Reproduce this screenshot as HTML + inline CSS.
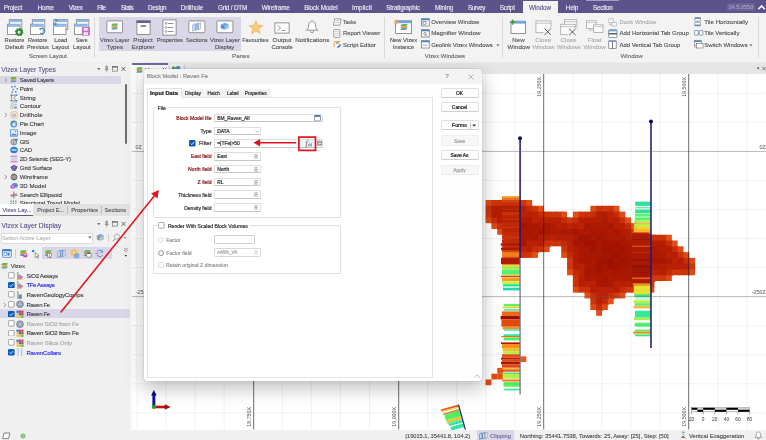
<!DOCTYPE html>
<html><head><meta charset="utf-8"><title>Vizex - Block Model : Raven Fe</title>
<style>
html,body{margin:0;padding:0;}
body{width:766px;height:440px;overflow:hidden;background:#f0f0f0;position:relative;font-family:"Liberation Sans",sans-serif;}
#root{position:absolute;left:0;top:0;width:766px;height:440px;overflow:hidden;will-change:transform;filter:blur(0.3px);}
.b{position:absolute;box-sizing:border-box;display:block;}
.t{position:absolute;white-space:nowrap;display:block;-webkit-text-stroke:0.12px;}
</style></head><body><div id="root">
<div class="b " style="left:0px;top:0px;width:766px;height:13.2px;background:#5d538b;"></div>
<div class="b " style="left:586px;top:0px;width:33px;height:1px;background:#a59cc9;"></div>
<div class="b " style="left:522.5px;top:1.2px;width:35.8px;height:12.2px;background:#f3f3f3;"></div>
<span class="t" style="left:3.8px;top:4px;font-size:6.3px;line-height:7px;color:#f1eff8;letter-spacing:-0.2px;">Project</span>
<span class="t" style="left:37.8px;top:4px;font-size:6.3px;line-height:7px;color:#f1eff8;letter-spacing:-0.23px;">Home</span>
<span class="t" style="left:68.8px;top:4px;font-size:6.3px;line-height:7px;color:#f1eff8;letter-spacing:-0.32px;">Vizex</span>
<span class="t" style="left:97.2px;top:4px;font-size:6.3px;line-height:7px;color:#f1eff8;letter-spacing:-0.46px;">File</span>
<span class="t" style="left:121px;top:4px;font-size:6.3px;line-height:7px;color:#f1eff8;letter-spacing:-0.41px;">Stats</span>
<span class="t" style="left:148px;top:4px;font-size:6.3px;line-height:7px;color:#f1eff8;letter-spacing:-0.22px;">Design</span>
<span class="t" style="left:180.8px;top:4px;font-size:6.3px;line-height:7px;color:#f1eff8;letter-spacing:-0.03px;">Drillhole</span>
<span class="t" style="left:218px;top:4px;font-size:6.3px;line-height:7px;color:#f1eff8;letter-spacing:-0.18px;">Grid / DTM</span>
<span class="t" style="left:261.7px;top:4px;font-size:6.3px;line-height:7px;color:#f1eff8;letter-spacing:-0.12px;">Wireframe</span>
<span class="t" style="left:304.2px;top:4px;font-size:6.3px;line-height:7px;color:#f1eff8;letter-spacing:-0.09px;">Block Model</span>
<span class="t" style="left:352px;top:4px;font-size:6.3px;line-height:7px;color:#f1eff8;letter-spacing:0.05px;">Implicit</span>
<span class="t" style="left:386.3px;top:4px;font-size:6.3px;line-height:7px;color:#f1eff8;letter-spacing:-0.13px;">Stratigraphic</span>
<span class="t" style="left:435px;top:4px;font-size:6.3px;line-height:7px;color:#f1eff8;letter-spacing:-0.04px;">Mining</span>
<span class="t" style="left:468px;top:4px;font-size:6.3px;line-height:7px;color:#f1eff8;letter-spacing:-0.43px;">Survey</span>
<span class="t" style="left:499.7px;top:4px;font-size:6.3px;line-height:7px;color:#f1eff8;letter-spacing:-0.18px;">Script</span>
<span class="t" style="left:565.8px;top:4px;font-size:6.3px;line-height:7px;color:#f1eff8;letter-spacing:-0.19px;">Help</span>
<span class="t" style="left:593px;top:4px;font-size:6.3px;line-height:7px;color:#f1eff8;letter-spacing:-0.22px;">Section</span>
<span class="t" style="left:529px;top:4px;font-size:6.3px;line-height:7px;color:#5d538b;letter-spacing:-0.07px;">Window</span>
<div class="b " style="left:726.8px;top:2.7px;width:28px;height:8.6px;background:#6b6197;border-radius:1px;"></div>
<span class="t" style="left:728.5px;top:4px;font-size:5.57px;line-height:6px;color:#a79fc9;">24.5.3550</span>
<svg class="b" style="left:757px;top:3px;" width="9" height="9" viewBox="0 0 9 9">
<path d="M1.3 6.3 L4.6 2.9 L7.9 6.3" fill="none" stroke="#fff" stroke-width="1.5"/>
</svg>
<div class="b " style="left:0px;top:13.2px;width:766px;height:48.5px;background:#f3f3f3;"></div>
<div class="b " style="left:0px;top:61.7px;width:766px;height:1px;background:#ededed;"></div>
<div class="b " style="left:94.3px;top:17px;width:0.7px;height:41px;background:#d9d9d9;"></div>
<div class="b " style="left:383.9px;top:17px;width:0.7px;height:41px;background:#d9d9d9;"></div>
<div class="b " style="left:502.3px;top:17px;width:0.7px;height:41px;background:#d9d9d9;"></div>
<div class="b " style="left:757.9px;top:17px;width:0.7px;height:41px;background:#d9d9d9;"></div>
<div class="b " style="left:99px;top:16.6px;width:141.6px;height:34.3px;background:#d9d6e8;"></div>
<svg class="b" style="left:6.8px;top:18.7px;" width="17" height="17" viewBox="0 0 17 17">
<rect x="2.3" y="0.5" width="12.5" height="10" fill="#fff" stroke="#7d7d7d" stroke-width="0.8"/>
<rect x="2.3" y="0.5" width="12.5" height="2.6" fill="#8fb6e6"/>
<rect x="0.5" y="5.2" width="12.5" height="10.3" fill="#fff" stroke="#7d7d7d" stroke-width="0.8"/>
<rect x="0.5" y="5.2" width="12.5" height="2.6" fill="#8fb6e6"/>
<circle cx="12.2" cy="13.2" r="2.6" fill="none" stroke="#2c8a2c" stroke-width="2.0"/><circle cx="12.2" cy="13.2" r="3.6" fill="none" stroke="#2c8a2c" stroke-width="1.2" stroke-dasharray="1.3 1.5"/>
</svg>
<span class="t" style="left:4.6px;top:37px;font-size:5.65px;line-height:6px;color:#505050;">Restore</span>
<span class="t" style="left:5.3px;top:44px;font-size:5.9px;line-height:6px;color:#505050;">Default</span>
<svg class="b" style="left:30px;top:18.7px;" width="17" height="17" viewBox="0 0 17 17">
<rect x="2.3" y="0.5" width="12.5" height="10" fill="#fff" stroke="#7d7d7d" stroke-width="0.8"/>
<rect x="2.3" y="0.5" width="12.5" height="2.6" fill="#8fb6e6"/>
<rect x="0.5" y="5.2" width="12.5" height="10.3" fill="#fff" stroke="#7d7d7d" stroke-width="0.8"/>
<rect x="0.5" y="5.2" width="12.5" height="2.6" fill="#8fb6e6"/>
<path d="M10.2 13.8 A2.6 2.6 0 1 0 10.6 9.8" fill="none" stroke="#4a86d0" stroke-width="1.1"/><path d="M9 9 L11.6 9.2 L10.2 11.4 Z" fill="#4a86d0"/>
</svg>
<span class="t" style="left:28px;top:37px;font-size:5.54px;line-height:6px;color:#505050;">Restore</span>
<span class="t" style="left:27px;top:44px;font-size:5.58px;line-height:6px;color:#505050;">Previous</span>
<svg class="b" style="left:53px;top:18.7px;" width="17" height="17" viewBox="0 0 17 17">
<rect x="2.3" y="0.5" width="12.5" height="10" fill="#fff" stroke="#7d7d7d" stroke-width="0.8"/>
<rect x="2.3" y="0.5" width="12.5" height="2.6" fill="#8fb6e6"/>
<rect x="0.5" y="5.2" width="12.5" height="10.3" fill="#fff" stroke="#7d7d7d" stroke-width="0.8"/>
<rect x="0.5" y="5.2" width="12.5" height="2.6" fill="#8fb6e6"/>
<path d="M3.6 1.0 A2.3 2.3 0 1 0 3.9 4.6" fill="none" stroke="#4a86d0" stroke-width="1.1"/><path d="M2.6 0 L5.4 1.0 L3.2 2.6 Z" fill="#4a86d0"/>
</svg>
<span class="t" style="left:54.3px;top:37px;font-size:5.8px;line-height:6px;color:#505050;">Load</span>
<span class="t" style="left:52px;top:44px;font-size:5.73px;line-height:6px;color:#505050;">Layout</span>
<svg class="b" style="left:74.2px;top:18.7px;" width="17" height="17" viewBox="0 0 17 17">
<rect x="2.3" y="0.5" width="12.5" height="10" fill="#fff" stroke="#7d7d7d" stroke-width="0.8"/>
<rect x="2.3" y="0.5" width="12.5" height="2.6" fill="#8fb6e6"/>
<rect x="0.5" y="5.2" width="12.5" height="10.3" fill="#fff" stroke="#7d7d7d" stroke-width="0.8"/>
<rect x="0.5" y="5.2" width="12.5" height="2.6" fill="#8fb6e6"/>
<rect x="8.2" y="8.6" width="7.2" height="7.6" fill="#c973c9" stroke="#b457b4" stroke-width="0.6"/><rect x="9.8" y="9" width="4" height="2.6" fill="#f3e3f3"/><rect x="9.6" y="13.2" width="4.4" height="3" fill="#f3e3f3"/>
</svg>
<span class="t" style="left:75.8px;top:37px;font-size:5.18px;line-height:6px;color:#505050;">Save</span>
<span class="t" style="left:73.1px;top:44px;font-size:5.83px;line-height:6px;color:#505050;">Layout</span>
<span class="t" style="left:29px;top:53px;font-size:5.89px;line-height:6px;color:#666;">Screen Layout</span>
<svg class="b" style="left:106px;top:20.4px;" width="18" height="14" viewBox="0 0 18 14">
<rect x="0.9" y="0.9" width="15.6" height="11.8" rx="0.8" fill="#fff" stroke="#7a7a7a" stroke-width="0.8"/>
<path d="M5 9.4 l1.6 -2.2 l5.6 0 l-1.6 2.2 z" fill="#5b9bd5"/>
<path d="M5 7.6 l1.6 -2.2 l5.6 0 l-1.6 2.2 z" fill="#f0a030"/>
<path d="M5 5.8 l1.6 -2.2 l5.6 0 l-1.6 2.2 z" fill="#5cb85c"/>
</svg>
<span class="t" style="left:100px;top:37px;font-size:5.67px;line-height:6px;color:#505050;">Vizex Layer</span>
<span class="t" style="left:106.53px;top:43px;font-size:6.2px;line-height:7px;color:#505050;">Types</span>
<svg class="b" style="left:135.5px;top:19.6px;" width="15" height="16" viewBox="0 0 15 16">
<rect x="0.9" y="0.9" width="13.2" height="13.6" fill="#fff" stroke="#7a7a7a" stroke-width="0.8"/><rect x="0.5" y="0.5" width="14" height="2.5" fill="#6a5d9a"/><rect x="4.6" y="5.4" width="5.6" height="1.3" fill="#555"/>
</svg>
<span class="t" style="left:133.35px;top:36px;font-size:6.2px;line-height:7px;color:#505050;">Project</span>
<span class="t" style="left:131.46px;top:43px;font-size:6.2px;line-height:7px;color:#505050;">Explorer</span>
<svg class="b" style="left:162.3px;top:18.6px;" width="15" height="17" viewBox="0 0 15 17">
<rect x="0.9" y="0.9" width="13.2" height="15.2" fill="#fff" stroke="#7a7a7a" stroke-width="0.8"/>
<circle cx="4" cy="4.4" r="1.0" fill="none" stroke="#777" stroke-width="0.6"/><rect x="5.8" y="4" width="5.6" height="0.8" fill="#777"/>
<circle cx="4" cy="8.4" r="1.0" fill="none" stroke="#777" stroke-width="0.6"/><rect x="5.8" y="8" width="5.6" height="0.8" fill="#777"/>
<circle cx="4" cy="12.4" r="1.0" fill="none" stroke="#777" stroke-width="0.6"/><rect x="5.8" y="12" width="5.6" height="0.8" fill="#777"/>
</svg>
<span class="t" style="left:156.7px;top:37px;font-size:5.77px;line-height:6px;color:#505050;">Properties</span>
<svg class="b" style="left:187.6px;top:20.4px;" width="18" height="14" viewBox="0 0 18 14">
<rect x="0.9" y="0.9" width="16" height="11.8" rx="0.8" fill="#fff" stroke="#7a7a7a" stroke-width="0.8"/>
<path d="M4.6 5 l2.6 -1.6 v6.2 l-2.6 1.6z" fill="#cfe3f7" stroke="#6f8fb0" stroke-width="0.5"/><path d="M7.6 4.4 l2.6 -1.6 v6.2 l-2.6 1.6z" fill="#9fc7ef" stroke="#4a86d0" stroke-width="0.5"/><path d="M10.4 3.8 l2.2 -1.4 v6.2 l-2.2 1.4z" fill="#e6e6e6" stroke="#8a8a8a" stroke-width="0.5"/>
</svg>
<span class="t" style="left:186px;top:37px;font-size:5.66px;line-height:6px;color:#505050;">Sections</span>
<svg class="b" style="left:215.6px;top:20.4px;" width="18" height="14" viewBox="0 0 18 14">
<rect x="0.9" y="0.9" width="16" height="11.8" rx="0.8" fill="#fff" stroke="#7a7a7a" stroke-width="0.8"/>
<path d="M8.8 2.8 l4 1.8 l-4 1.8 l-4 -1.8z" fill="#6aa9e9"/><path d="M4.8 4.6 l4 1.8 v3.6 l-4 -1.8z" fill="#3f86d0"/><path d="M12.8 4.6 l-4 1.8 v3.6 l4 -1.8z" fill="#8fbdee"/><path d="M4.6 7.4 l4.2 1.9 l4.2 -1.9" fill="none" stroke="#dfe9f5" stroke-width="0.5"/>
</svg>
<span class="t" style="left:210px;top:37px;font-size:5.76px;line-height:6px;color:#505050;">Vizex Layer</span>
<span class="t" style="left:215px;top:44px;font-size:5.89px;line-height:6px;color:#505050;">Display</span>
<svg class="b" style="left:247.5px;top:19.6px;" width="16" height="15" viewBox="0 0 16 15">
<polygon points="7.9,0.8 9.6,5.55 14.65,5.71 10.66,8.8 12.07,13.64 7.9,10.8 3.73,13.64 5.14,8.8 1.15,5.71 6.2,5.55" fill="#f8cd7e" stroke="#f2a84a" stroke-width="0.7" stroke-linejoin="round"/>
</svg>
<span class="t" style="left:242.2px;top:37px;font-size:5.63px;line-height:6px;color:#505050;">Favourites</span>
<svg class="b" style="left:274.4px;top:21.8px;" width="16" height="12" viewBox="0 0 16 12">
<rect x="0.9" y="0.9" width="14.2" height="10.2" fill="#fff" stroke="#7a7a7a" stroke-width="0.8"/><path d="M3.6 3.4 l3 2.6 l-3 2.6" fill="none" stroke="#777" stroke-width="0.8"/><rect x="7.6" y="8.2" width="3.8" height="0.8" fill="#777"/>
</svg>
<span class="t" style="left:272.6px;top:36px;font-size:6.2px;line-height:7px;color:#505050;letter-spacing:0.03px;">Output</span>
<span class="t" style="left:271.6px;top:44px;font-size:5.75px;line-height:6px;color:#505050;">Console</span>
<svg class="b" style="left:305px;top:20.4px;" width="14" height="14" viewBox="0 0 14 14">
<path d="M7.1 1 C4.4 1 3.6 3.6 3.6 6 C3.6 8.2 2.4 9 1.4 10.2 L12.8 10.2 C11.8 9 10.6 8.2 10.6 6 C10.6 3.6 9.8 1 7.1 1 Z" fill="#fdfdfd" stroke="#7a7a7a" stroke-width="0.8"/><path d="M5.6 11.2 a1.5 1.5 0 0 0 3 0" fill="none" stroke="#7a7a7a" stroke-width="0.8"/>
</svg>
<span class="t" style="left:295.3px;top:36px;font-size:6.2px;line-height:7px;color:#505050;letter-spacing:0.02px;">Notifications</span>
<span class="t" style="left:232.11px;top:52px;font-size:6.2px;line-height:7px;color:#666;">Panes</span>
<svg class="b" style="left:332.5px;top:18.2px;" width="9" height="8" viewBox="0 0 9 8">
<path d="M1.6 0.8 h6.4 l-1.2 6.4 h-6.4z" fill="#fff" stroke="#777" stroke-width="0.7"/><path d="M2.6 2.6 h3.6 M2.2 4.6 h3.6" stroke="#999" stroke-width="0.6"/>
</svg>
<span class="t" style="left:343px;top:19px;font-size:5.09px;line-height:6px;color:#505050;">Tasks</span>
<svg class="b" style="left:333px;top:29px;" width="8" height="9" viewBox="0 0 8 9">
<rect x="0.8" y="0.6" width="6" height="7.8" rx="0.6" fill="#fff" stroke="#777" stroke-width="0.7"/><path d="M2 2.6 h3.6 M2 4.4 h3.6 M2 6.2 h3.6" stroke="#aaa" stroke-width="0.6"/>
</svg>
<span class="t" style="left:343px;top:30px;font-size:5.9px;line-height:6px;color:#505050;">Report Viewer</span>
<svg class="b" style="left:332.5px;top:40px;" width="9" height="9" viewBox="0 0 9 9">
<path d="M1.2 7 V1.6 h6.2" fill="none" stroke="#f0a050" stroke-width="1"/><path d="M3 3 h3" stroke="#555" stroke-width="0.8"/><path d="M4.6 7.6 l3 -3" stroke="#2f7fd0" stroke-width="1.5"/>
</svg>
<span class="t" style="left:343px;top:42px;font-size:6.02px;line-height:6px;color:#505050;">Script Editor</span>
<svg class="b" style="left:393px;top:19px;" width="20" height="16" viewBox="0 0 20 16">
<rect x="2.6" y="1.8" width="16" height="12.6" fill="#fff" stroke="#7a7a7a" stroke-width="0.8"/><rect x="2.6" y="1.8" width="16" height="2.4" fill="#6aa3e6"/>
<path d="M7.2 11.11 l1.68 -2.31 l5.88 0 l-1.68 2.31 z" fill="#5b9bd5"/>
<path d="M7.2 9.22 l1.68 -2.31 l5.88 0 l-1.68 2.31 z" fill="#f0a030"/>
<path d="M7.2 7.33 l1.68 -2.31 l5.88 0 l-1.68 2.31 z" fill="#5cb85c"/>
<path d="M3.4 0.2 v5.6 M0.6 3 h5.6 M1.4 1 l4 4 M5.4 1 l-4 4" stroke="#f7a85a" stroke-width="0.7"/>
</svg>
<span class="t" style="left:389.9px;top:37px;font-size:5.8px;line-height:6px;color:#505050;">New Vizex</span>
<span class="t" style="left:393px;top:44px;font-size:5.56px;line-height:6px;color:#505050;">Instance</span>
<svg class="b" style="left:420.8px;top:17.8px;" width="9" height="9" viewBox="0 0 9 9">
<rect x="0.6" y="0.8" width="7.6" height="7.2" fill="#fff" stroke="#6b6b6b" stroke-width="0.7"/><rect x="0.3" y="0.5" width="8.2" height="1.8" fill="#4a86d0"/><rect x="2" y="3.6" width="3" height="2.6" fill="none" stroke="#555" stroke-width="0.6"/>
</svg>
<span class="t" style="left:431.2px;top:19px;font-size:6.01px;line-height:6px;color:#505050;">Overview Window</span>
<svg class="b" style="left:420.8px;top:29px;" width="9" height="9" viewBox="0 0 9 9">
<rect x="0.6" y="0.8" width="7.6" height="7.2" fill="#fff" stroke="#6b6b6b" stroke-width="0.7"/><rect x="0.3" y="0.5" width="8.2" height="1.8" fill="#4a86d0"/><circle cx="4" cy="4.8" r="1.3" fill="none" stroke="#555" stroke-width="0.6"/><path d="M5 5.8 l1.4 1.4" stroke="#555" stroke-width="0.6"/>
</svg>
<span class="t" style="left:431.2px;top:29px;font-size:6.2px;line-height:7px;color:#505050;">Magnifier Window</span>
<svg class="b" style="left:420.8px;top:40.2px;" width="9" height="9" viewBox="0 0 9 9">
<rect x="0.6" y="0.8" width="7.6" height="7.2" fill="#fff" stroke="#6b6b6b" stroke-width="0.7"/><rect x="0.3" y="0.5" width="8.2" height="1.8" fill="#4a86d0"/><path d="M2 5.6 c1 -2.4 2.4 1.6 4.4 -1" fill="none" stroke="#c060c0" stroke-width="0.9"/>
</svg>
<span class="t" style="left:431.2px;top:42px;font-size:5.9px;line-height:6px;color:#505050;">Geolink Vizex Windows</span>
<svg class="b" style="left:495.8px;top:43.6px" width="4" height="3" viewBox="0 0 4 3"><path d="M0.4 0.6 h3 l-1.5 1.7z" fill="#555"/></svg>
<span class="t" style="left:424.8px;top:53px;font-size:5.95px;line-height:6px;color:#666;">Vizex Windows</span>
<svg class="b" style="left:509.2px;top:18.8px;" width="18" height="16" viewBox="0 0 18 16">
<rect x="2" y="2.2" width="14.6" height="12.2" fill="#fff" stroke="#7a7a7a" stroke-width="0.8"/><rect x="2" y="2.2" width="14.6" height="2.4" fill="#6aa3e6"/><path d="M3.6 0.4 v5.4 M0.9 3.1 h5.4" stroke="#3a9a3a" stroke-width="1.3"/>
</svg>
<span class="t" style="left:512.3px;top:36px;font-size:6.2px;line-height:7px;color:#505050;">New</span>
<span class="t" style="left:507.6px;top:43px;font-size:6.2px;line-height:7px;color:#505050;letter-spacing:0.06px;">Window</span>
<svg class="b" style="left:534.6px;top:20.2px;" width="18" height="16" viewBox="0 0 18 16">
<rect x="0.9" y="0.9" width="15" height="11.8" fill="#fbfbfb" stroke="#a9a9a9" stroke-width="0.8"/><path d="M0.9 3.2 h15" stroke="#a9a9a9" stroke-width="0.7"/><rect x="8.6" y="7.6" width="8.6" height="7.8" fill="#f3f3f3"/><path d="M9.6 8.6 l6.2 6.2 M15.8 8.6 l-6.2 6.2" stroke="#4d4d4d" stroke-width="0.9"/>
</svg>
<span class="t" style="left:535.27px;top:36px;font-size:6.2px;line-height:7px;color:#ababab;">Close</span>
<span class="t" style="left:532.4px;top:43px;font-size:6.19px;line-height:7px;color:#ababab;">Window</span>
<svg class="b" style="left:560px;top:18.6px;" width="18" height="17" viewBox="0 0 18 17">
<rect x="4.4" y="0.7" width="12.4" height="10" fill="#fbfbfb" stroke="#a9a9a9" stroke-width="0.8"/><path d="M4.4 2.8 h12.4" stroke="#a9a9a9" stroke-width="0.7"/><rect x="0.7" y="5.3" width="14.6" height="10.4" fill="#fbfbfb" stroke="#a9a9a9" stroke-width="0.8"/><path d="M0.7 7.6 h14.6" stroke="#a9a9a9" stroke-width="0.7"/><rect x="8" y="8.8" width="9" height="8" fill="#f3f3f3"/><path d="M9.2 9.8 l6.4 6.4 M15.6 9.8 l-6.4 6.4" stroke="#4d4d4d" stroke-width="0.9"/>
</svg>
<span class="t" style="left:560.57px;top:36px;font-size:6.2px;line-height:7px;color:#ababab;">Close</span>
<span class="t" style="left:557px;top:44px;font-size:5.84px;line-height:6px;color:#ababab;">Windows</span>
<svg class="b" style="left:585.6px;top:20.4px;" width="18" height="14" viewBox="0 0 18 14">
<rect x="0.6" y="0.8" width="9.6" height="7.6" fill="#fbfbfb" stroke="#a9a9a9" stroke-width="0.8"/><path d="M0.6 2.6 h9.6" stroke="#a9a9a9" stroke-width="0.6"/><path d="M3.6 8.4 v1.8 h3" fill="none" stroke="#a9a9a9" stroke-width="0.7"/><rect x="7.6" y="4.8" width="9.4" height="7.6" fill="#fbfbfb" stroke="#a9a9a9" stroke-width="0.8"/><path d="M7.6 6.6 h9.4" stroke="#a9a9a9" stroke-width="0.6"/>
</svg>
<span class="t" style="left:587.71px;top:36px;font-size:6.2px;line-height:7px;color:#ababab;">Float</span>
<span class="t" style="left:583.4px;top:43px;font-size:6.2px;line-height:7px;color:#ababab;letter-spacing:0.06px;">Window</span>
<svg class="b" style="left:608.4px;top:17.6px;" width="10" height="9" viewBox="0 0 10 9">
<rect x="0.7" y="0.7" width="4.6" height="3.8" rx="0.6" fill="#fafafa" stroke="#a9a9a9" stroke-width="0.7"/><rect x="3.8" y="4.4" width="5" height="3.6" rx="0.6" fill="#fafafa" stroke="#a9a9a9" stroke-width="0.7"/><path d="M1.6 4.6 v2 h2" fill="none" stroke="#a9a9a9" stroke-width="0.7"/>
</svg>
<span class="t" style="left:619.5px;top:19px;font-size:6.04px;line-height:6px;color:#ababab;">Dock Window</span>
<svg class="b" style="left:608.4px;top:28.6px;" width="10" height="9" viewBox="0 0 10 9">
<rect x="0.7" y="0.7" width="8.2" height="7.8" rx="0.8" fill="#fff" stroke="#6b6b6b" stroke-width="0.7"/><rect x="0.9" y="0.9" width="7.8" height="1.5" fill="#6aa3e6"/><rect x="0.7" y="4.2" width="8.2" height="1.2" fill="#27405f"/>
</svg>
<span class="t" style="left:619.5px;top:30px;font-size:6.04px;line-height:6px;color:#505050;">Add Horizontal Tab Group</span>
<svg class="b" style="left:608.4px;top:40px;" width="10" height="9" viewBox="0 0 10 9">
<rect x="0.7" y="0.7" width="7.6" height="7.8" rx="0.5" fill="#fff" stroke="#6b6b6b" stroke-width="0.7"/><rect x="0.9" y="0.7" width="7.2" height="1.3" fill="#6aa3e6"/><path d="M4.5 2 v6.4" stroke="#555" stroke-width="0.8"/>
</svg>
<span class="t" style="left:619.5px;top:42px;font-size:5.93px;line-height:6px;color:#505050;">Add Vertical Tab Group</span>
<span class="t" style="left:620.4px;top:52px;font-size:6.2px;line-height:7px;color:#666;letter-spacing:0.06px;">Window</span>
<svg class="b" style="left:694.4px;top:17.4px;" width="8" height="10" viewBox="0 0 8 10">
<rect x="0.8" y="0.6" width="5.6" height="3.6" rx="0.5" fill="#fff" stroke="#6b6b6b" stroke-width="0.6"/><rect x="0.8" y="0.6" width="5.6" height="1.3" fill="#4a86d0"/><rect x="0.8" y="5.2" width="5.6" height="3.6" rx="0.5" fill="#fff" stroke="#6b6b6b" stroke-width="0.6"/><rect x="0.8" y="7.6" width="5.6" height="1.3" fill="#4a86d0"/>
</svg>
<span class="t" style="left:704.2px;top:18px;font-size:6.19px;line-height:7px;color:#505050;">Tile Horizontally</span>
<svg class="b" style="left:693.6px;top:30.4px;" width="10" height="6" viewBox="0 0 10 6">
<rect x="0.6" y="0.6" width="3.6" height="4.6" rx="0.5" fill="#fff" stroke="#5a6f99" stroke-width="0.7"/><rect x="5.2" y="0.6" width="3.6" height="4.6" rx="0.5" fill="#fff" stroke="#5a6f99" stroke-width="0.7"/>
</svg>
<span class="t" style="left:704.2px;top:30px;font-size:6.03px;line-height:6px;color:#505050;">Tile Vertically</span>
<svg class="b" style="left:693.6px;top:40px;" width="10" height="9" viewBox="0 0 10 9">
<rect x="0.6" y="0.6" width="6.6" height="5" fill="#fff" stroke="#6b6b6b" stroke-width="0.6"/><rect x="0.6" y="0.6" width="6.6" height="1.4" fill="#4a86d0"/><rect x="2.6" y="3.4" width="6.4" height="4.6" fill="#fff" stroke="#6b6b6b" stroke-width="0.6"/><path d="M0.6 5.6 c0 2 0.8 2.2 2 2.2" fill="none" stroke="#c060c0" stroke-width="0.7"/>
</svg>
<span class="t" style="left:704.2px;top:42px;font-size:5.98px;line-height:6px;color:#505050;">Switch Windows</span>
<svg class="b" style="left:749.2px;top:43.6px" width="4" height="3" viewBox="0 0 4 3"><path d="M0.4 0.6 h3 l-1.5 1.7z" fill="#555"/></svg>
<div class="b " style="left:0px;top:62.7px;width:130px;height:367.3px;background:#f0f0f0;"></div>
<div class="b " style="left:130px;top:62.7px;width:1.8px;height:367.3px;background:#f7f7f7;"></div>
<span class="t" style="left:1.3px;top:66px;font-size:6.72px;line-height:7px;color:#5d538b;">Vizex Layer Types</span>
<svg class="b" style="left:96px;top:65.2px;" width="30" height="8" viewBox="0 0 30 8">
<path d="M1.2 3.2 h3.2 l-1.6 1.9z" fill="#444"/>
<path d="M9.8 1 h1.7 v3.3 h0.7 v0.6 h-3.1 v-0.6 h0.7z" fill="#a8a098" stroke="#777" stroke-width="0.4"/><path d="M10.65 4.9 v2.3" stroke="#777" stroke-width="0.5"/>
<rect x="16.6" y="1.7" width="4.8" height="4.4" fill="none" stroke="#555" stroke-width="0.55"/><path d="M16.4 2.1 h5.2" stroke="#555" stroke-width="0.9"/>
<path d="M25.6 1.9 l3.8 4 M29.4 1.9 l-3.8 4" stroke="#333" stroke-width="0.7"/>
</svg>
<div class="b " style="left:0px;top:75.6px;width:120.8px;height:8.2px;background:#d9d6e8;"></div>
<div class="b " style="left:124.5px;top:83.8px;width:2.3px;height:60px;background:#6e6e6e;border-radius:1px;"></div>
<div class="b" style="left:0;top:74px;width:124px;height:130.4px;overflow:hidden">
<svg class="b" style="left:3.8px;top:3px" width="4" height="6" viewBox="0 0 4 6"><path d="M0.8 0.8 l2 2.2 l-2 2.2" fill="none" stroke="#777" stroke-width="0.7"/></svg>
<svg class="b" style="left:9.6px;top:2px;" width="8" height="8" viewBox="0 0 8 8">
<path d="M0.2 6.18 l1.44 -1.98 l5.04 0 l-1.44 1.98 z" fill="#5b9bd5"/>
<path d="M0.2 4.56 l1.44 -1.98 l5.04 0 l-1.44 1.98 z" fill="#f0a030"/>
<path d="M0.2 2.94 l1.44 -1.98 l5.04 0 l-1.44 1.98 z" fill="#5cb85c"/>
</svg>
<span class="t" style="left:19.8px;top:2px;font-size:6.1px;line-height:7px;color:#3e3e3e;letter-spacing:-0.28px;">Saved Layers</span>
<svg class="b" style="left:9.6px;top:10.81px;" width="8" height="8" viewBox="0 0 8 8">
<rect x="1.2" y="1.2" width="1.5" height="1.5" fill="#3b82d6"/>
<rect x="4.2" y="0.8" width="1.5" height="1.5" fill="#3b82d6"/>
<rect x="6.6" y="3" width="1.5" height="1.5" fill="#3b82d6"/>
<rect x="2.6" y="3.8" width="1.5" height="1.5" fill="#3b82d6"/>
<rect x="5" y="6" width="1.5" height="1.5" fill="#3b82d6"/>
<rect x="1.4" y="6.4" width="1.5" height="1.5" fill="#3b82d6"/>
</svg>
<span class="t" style="left:19.8px;top:11px;font-size:6.1px;line-height:7px;color:#3e3e3e;letter-spacing:-0.16px;">Point</span>
<svg class="b" style="left:9.6px;top:19.62px;" width="8" height="8" viewBox="0 0 8 8">
<path d="M1.4 1.2 h5 l-2.6 2.8 l2.6 2.8 h-5z" fill="none" stroke="#555" stroke-width="0.6"/>
<rect x="0.6" y="0.4" width="1.5" height="1.5" fill="#3b82d6"/>
<rect x="5.8" y="0.4" width="1.5" height="1.5" fill="#3b82d6"/>
<rect x="0.6" y="6" width="1.5" height="1.5" fill="#3b82d6"/>
<rect x="5.8" y="6" width="1.5" height="1.5" fill="#3b82d6"/>
</svg>
<span class="t" style="left:19.8px;top:20px;font-size:6.1px;line-height:7px;color:#3e3e3e;letter-spacing:-0.02px;">String</span>
<svg class="b" style="left:9.6px;top:28.43px;" width="8" height="8" viewBox="0 0 8 8">
<path d="M1 7 V4 a3.4 3.4 0 0 1 3.4 -3.4 H7" fill="none" stroke="#7ec77e" stroke-width="0.8"/><path d="M2.8 7 V4.6 a2 2 0 0 1 2 -2 H7" fill="none" stroke="#c78ad0" stroke-width="0.8"/><circle cx="5.6" cy="5.6" r="1.3" fill="#5aa0e0"/>
</svg>
<span class="t" style="left:19.8px;top:28px;font-size:6.1px;line-height:7px;color:#3e3e3e;letter-spacing:-0.06px;">Contour</span>
<svg class="b" style="left:3.8px;top:38.24px" width="4" height="6" viewBox="0 0 4 6"><path d="M0.8 0.8 l2 2.2 l-2 2.2" fill="none" stroke="#777" stroke-width="0.7"/></svg>
<svg class="b" style="left:9.6px;top:37.24px;" width="8" height="8" viewBox="0 0 8 8">
<rect x="0.8" y="0.8" width="6.4" height="6.4" rx="1.6" fill="#fff7ee" stroke="#f0a35a" stroke-width="0.8"/><path d="M3 2.4 v3.6 M5 2.4 v3.6" stroke="#3b82d6" stroke-width="0.8"/>
</svg>
<span class="t" style="left:19.8px;top:37px;font-size:6.1px;line-height:7px;color:#3e3e3e;letter-spacing:0.11px;">Drillhole</span>
<svg class="b" style="left:9.6px;top:46.05px;" width="8" height="8" viewBox="0 0 8 8">
<circle cx="3.8" cy="4" r="3.4" fill="#3f8fe0"/><circle cx="4.2" cy="4.4" r="1.9" fill="#dfeefa"/><path d="M4.6 3.6 V0.7 A3.3 3.3 0 0 1 7.4 3.6z" fill="#6cc46c"/><path d="M4.8 4.2 H7.4 A3.3 3.3 0 0 1 5.6 6.8z" fill="#d070d0"/>
</svg>
<span class="t" style="left:19.8px;top:46px;font-size:6.1px;line-height:7px;color:#3e3e3e;letter-spacing:-0.17px;">Pie Chart</span>
<svg class="b" style="left:9.6px;top:54.86px;" width="8" height="8" viewBox="0 0 8 8">
<rect x="0.6" y="0.8" width="6.8" height="6.4" fill="#eaf3fc" stroke="#3b82d6" stroke-width="0.7"/><path d="M1 6.6 l2 -2.6 l1.4 1.6 l1.2 -1 l1.4 2z" fill="#3b82d6"/><circle cx="5.4" cy="2.6" r="0.7" fill="#3b82d6"/>
</svg>
<span class="t" style="left:19.8px;top:55px;font-size:6.1px;line-height:7px;color:#3e3e3e;letter-spacing:-0.03px;">Image</span>
<svg class="b" style="left:9.6px;top:63.67px;" width="8" height="8" viewBox="0 0 8 8">
<circle cx="3.8" cy="4" r="3" fill="#e8e8e8" stroke="#555" stroke-width="0.6"/><path d="M0.8 4 h6 M3.8 1 v6 M1.6 2.2 c1.4 1 3 1 4.4 0 M1.6 5.8 c1.4 -1 3 -1 4.4 0" fill="none" stroke="#555" stroke-width="0.4"/><circle cx="6.3" cy="1.7" r="1.3" fill="#3b82d6"/>
</svg>
<span class="t" style="left:19.8px;top:64px;font-size:6.1px;line-height:7px;color:#3e3e3e;letter-spacing:-0.54px;">GIS</span>
<svg class="b" style="left:9.6px;top:72.48px;" width="8" height="8" viewBox="0 0 8 8">
<ellipse cx="4" cy="4" rx="3.8" ry="3.2" fill="#2f7fd8"/><rect x="1.6" y="3.3" width="4.8" height="1.4" fill="#cfe2f8"/>
</svg>
<span class="t" style="left:19.8px;top:72px;font-size:6.1px;line-height:7px;color:#3e3e3e;letter-spacing:-0.23px;">CAD</span>
<svg class="b" style="left:9.6px;top:81.29px;" width="8" height="8" viewBox="0 0 8 8">
<rect x="0.6" y="0.8" width="6.8" height="6.4" fill="#e4e4e8"/><rect x="0.6" y="0.6" width="6.8" height="1.4" fill="#d78ad8"/><rect x="0.6" y="6" width="6.8" height="1.4" fill="#d78ad8"/><path d="M0.8 3.4 c2 -1 4 1 6.4 -0.2 M0.8 5 c2 -1 4 1 6.4 -0.2" fill="none" stroke="#b9a8c8" stroke-width="0.5"/>
</svg>
<span class="t" style="left:19.8px;top:81px;font-size:6.1px;line-height:7px;color:#3e3e3e;letter-spacing:-0.25px;">2D Seismic (SEG-Y)</span>
<svg class="b" style="left:9.6px;top:90.1px;" width="8" height="8" viewBox="0 0 8 8">
<path d="M0.4 3 l3.4 -2.2 l3.9 2 l-2.3 4.2 l-3.2 -0.6z" fill="#5d4f9a"/><path d="M1.6 4.6 l3.6 -2.6 M2.6 2 l3.4 2.2 M2 6 l3 -1" stroke="#d9a0d8" stroke-width="0.5"/>
</svg>
<span class="t" style="left:19.8px;top:90px;font-size:6.1px;line-height:7px;color:#3e3e3e;letter-spacing:-0.14px;">Grid Surface</span>
<svg class="b" style="left:3.8px;top:99.91px" width="4" height="6" viewBox="0 0 4 6"><path d="M0.8 0.8 l2 2.2 l-2 2.2" fill="none" stroke="#777" stroke-width="0.7"/></svg>
<svg class="b" style="left:9.6px;top:98.91px;" width="8" height="8" viewBox="0 0 8 8">
<circle cx="4" cy="4" r="3" fill="#f4f4f4" stroke="#444" stroke-width="0.7"/><path d="M1 4 h6 M4 1 v6" stroke="#444" stroke-width="0.5"/><ellipse cx="4" cy="4" rx="1.5" ry="3" fill="none" stroke="#444" stroke-width="0.4"/><path d="M1.5 2.4 h5 M1.5 5.6 h5" stroke="#444" stroke-width="0.4"/>
</svg>
<span class="t" style="left:19.8px;top:99px;font-size:6.1px;line-height:7px;color:#3e3e3e;letter-spacing:0.02px;">Wireframe</span>
<svg class="b" style="left:9.6px;top:107.72px;" width="8" height="8" viewBox="0 0 8 8">
<ellipse cx="4.8" cy="3.4" rx="3" ry="2.4" fill="#4f8fe6"/><ellipse cx="2.8" cy="4.8" rx="2.6" ry="2" fill="#b45fd0"/><ellipse cx="3" cy="4.6" rx="1.2" ry="0.8" fill="#d9a6e6"/>
</svg>
<span class="t" style="left:19.8px;top:108px;font-size:6.1px;line-height:7px;color:#3e3e3e;letter-spacing:0.06px;">3D Model</span>
<svg class="b" style="left:9.6px;top:116.53px;" width="8" height="8" viewBox="0 0 8 8">
<path d="M3.8 0.4 v7.2" stroke="#3b76c4" stroke-width="0.8"/><path d="M0.4 4.2 h7.2" stroke="#d04040" stroke-width="0.9"/><path d="M1.2 6 l5.4 -3.6" stroke="#4a9a4a" stroke-width="0.8"/><ellipse cx="4" cy="4" rx="2.8" ry="1.3" fill="none" stroke="#d88080" stroke-width="0.4"/>
</svg>
<span class="t" style="left:19.8px;top:117px;font-size:6.1px;line-height:7px;color:#3e3e3e;letter-spacing:-0.11px;">Search Ellipsoid</span>
<svg class="b" style="left:9.6px;top:125.34px;" width="8" height="8" viewBox="0 0 8 8">
<path d="M1 1.4 v5 M3.4 1.4 v5 M5.8 1.4 v5" stroke="#4a9a4a" stroke-width="1.1" stroke-dasharray="1.6 0.8"/>
</svg>
<span class="t" style="left:19.8px;top:125px;font-size:6.1px;line-height:7px;color:#3e3e3e;letter-spacing:-0.07px;">Structural Trend Model</span>
</div>
<div class="b " style="left:0px;top:204.3px;width:129.6px;height:12.1px;background:#e1e1e1;"></div>
<div class="b " style="left:0px;top:204.3px;width:32.9px;height:10.9px;background:#fcfcfc;"></div>
<div class="b " style="left:0px;top:215.1px;width:32.9px;height:1.2px;background:#5d538b;"></div>
<span class="t" style="left:2.6px;top:207px;font-size:5.71px;line-height:6px;color:#5d538b;">Vizex Lay...</span>
<span class="t" style="left:37.2px;top:207px;font-size:5.46px;line-height:6px;color:#555;">Project E...</span>
<div class="b " style="left:67px;top:206.4px;width:0.5px;height:8px;background:#bdbdbd;"></div>
<span class="t" style="left:71.2px;top:207px;font-size:5.88px;line-height:6px;color:#555;">Properties</span>
<div class="b " style="left:100.5px;top:206.4px;width:0.5px;height:8px;background:#bdbdbd;"></div>
<span class="t" style="left:104.5px;top:207px;font-size:5.63px;line-height:6px;color:#555;">Sections</span>
<span class="t" style="left:1.6px;top:222px;font-size:6.81px;line-height:7px;color:#5d538b;">Vizex Layer Display</span>
<svg class="b" style="left:96px;top:220.4px;" width="30" height="8" viewBox="0 0 30 8">
<path d="M1.2 3.2 h3.2 l-1.6 1.9z" fill="#444"/>
<path d="M9.8 1 h1.7 v3.3 h0.7 v0.6 h-3.1 v-0.6 h0.7z" fill="#a8a098" stroke="#777" stroke-width="0.4"/><path d="M10.65 4.9 v2.3" stroke="#777" stroke-width="0.5"/>
<rect x="16.6" y="1.7" width="4.8" height="4.4" fill="none" stroke="#555" stroke-width="0.55"/><path d="M16.4 2.1 h5.2" stroke="#555" stroke-width="0.9"/>
<path d="M25.6 1.9 l3.8 4 M29.4 1.9 l-3.8 4" stroke="#333" stroke-width="0.7"/>
</svg>
<div class="b " style="left:0.7px;top:232.5px;width:92.2px;height:11px;background:#fff;border:0.7px solid #dcdcdc;border-radius:1px;"></div>
<span class="t" style="left:2.2px;top:235px;font-size:5.7px;line-height:6px;color:#b4b4b4;">Select Active Layer</span>
<svg class="b" style="left:88.2px;top:236.4px" width="4" height="3" viewBox="0 0 4 3"><path d="M0.3 0.5 h3.2 l-1.6 1.9z" fill="#555"/></svg>
<svg class="b" style="left:96.2px;top:233px;" width="9" height="9" viewBox="0 0 9 9">
<path d="M4.4 1 l3.6 1.6 l-3.6 1.6 l-3.6 -1.6z" fill="#6aa9e9"/><path d="M0.8 2.6 l3.6 1.6 v3.6 l-3.6 -1.6z" fill="#8a8a8a"/><path d="M8 2.6 l-3.6 1.6 v3.6 l3.6 -1.6z" fill="#b5b5b5"/><path d="M0.8 4.4 l3.6 1.6 l3.6 -1.6" fill="none" stroke="#e8e8e8" stroke-width="0.5"/>
</svg>
<div class="b " style="left:108px;top:233.6px;width:0.5px;height:8.4px;background:#cfcfcf;"></div>
<svg class="b" style="left:112px;top:233px;" width="15" height="9" viewBox="0 0 15 9">
<circle cx="5" cy="3.6" r="2.6" fill="#fbfbfb" stroke="#8a8a8a" stroke-width="0.7"/><path d="M3.2 5.6 l-2.2 2.6" stroke="#8a8a8a" stroke-width="0.9"/><path d="M11.8 4 h2.4 l-1.2 1.5z" fill="#666"/>
</svg>
<div class="b " style="left:42.2px;top:246.9px;width:70px;height:12.2px;background:#d9d6e8;"></div>
<svg class="b" style="left:1.6px;top:248.8px;" width="10" height="9" viewBox="0 0 10 9">
<rect x="0.5" y="0.5" width="8.8" height="7.8" rx="0.8" fill="#fff" stroke="#3b76c4" stroke-width="0.8"/><rect x="0.5" y="0.5" width="8.8" height="1.8" fill="#3b76c4"/><rect x="2" y="3.6" width="2.4" height="3" fill="none" stroke="#3b76c4" stroke-width="0.6"/><rect x="5.4" y="3.6" width="2.2" height="3" fill="#3b76c4"/>
</svg>
<div class="b " style="left:15.1px;top:249px;width:0.5px;height:9px;background:#cfcfcf;"></div>
<svg class="b" style="left:19px;top:248.8px;" width="10" height="9" viewBox="0 0 10 9">
<path d="M0.6 7 l1.6 -2.2 l5.6 0 l-1.6 2.2 z" fill="#5b9bd5"/>
<path d="M0.6 5.2 l1.6 -2.2 l5.6 0 l-1.6 2.2 z" fill="#f0a030"/>
<path d="M0.6 3.4 l1.6 -2.2 l5.6 0 l-1.6 2.2 z" fill="#5cb85c"/>
<rect x="4.4" y="4.6" width="3.8" height="3.6" fill="#c044c0"/><rect x="5.2" y="5" width="2" height="1.2" fill="#f3dff3"/>
</svg>
<svg class="b" style="left:31px;top:248.6px;" width="10" height="10" viewBox="0 0 10 10">
<circle cx="2.2" cy="2" r="1.3" fill="#3b82d6"/><path d="M4.2 3.6 v5 l1.3 -1.2 l1 2 l0.9 -0.4 l-1 -2 l1.7 -0.2z" fill="#fff" stroke="#444" stroke-width="0.5"/>
</svg>
<svg class="b" style="left:44.4px;top:248.8px;" width="10" height="9" viewBox="0 0 10 9">
<path d="M0.6 7 l1.6 -2.2 l5.6 0 l-1.6 2.2 z" fill="#5b9bd5"/>
<path d="M0.6 5.2 l1.6 -2.2 l5.6 0 l-1.6 2.2 z" fill="#f0a030"/>
<path d="M0.6 3.4 l1.6 -2.2 l5.6 0 l-1.6 2.2 z" fill="#5cb85c"/>
<rect x="3.6" y="4.6" width="4" height="3.6" fill="#fff" stroke="#666" stroke-width="0.5"/><path d="M5.4 5.4 v2.8 l0.8 -0.6 l0.6 1.2" fill="none" stroke="#333" stroke-width="0.5"/>
</svg>
<svg class="b" style="left:56.6px;top:248.8px;" width="10" height="9" viewBox="0 0 10 9">
<path d="M0.8 2.6 l2.4 -1.4 v6 l-2.4 1.4z" fill="#e3ecf6" stroke="#5b6f8a" stroke-width="0.5"/><path d="M3.4 2.2 l2.4 -1.4 v6 l-2.4 1.4z" fill="#9fc7ef" stroke="#3b76c4" stroke-width="0.5"/><path d="M6 1.8 l2.2 -1.2 v6 l-2.2 1.2z" fill="#e9e9e9" stroke="#777" stroke-width="0.5"/>
</svg>
<svg class="b" style="left:70px;top:248.6px;" width="10" height="10" viewBox="0 0 10 10">
<circle cx="4" cy="3.8" r="3.3" fill="#f9cf6e" stroke="#f0aa3a" stroke-width="0.5"/><circle cx="4" cy="3.8" r="1.5" fill="#fbe3a8" stroke="#e9a030" stroke-width="0.4"/><rect x="4.6" y="4.8" width="4.2" height="4" rx="0.6" fill="#7fb2ea" stroke="#4a86d0" stroke-width="0.4"/>
</svg>
<svg class="b" style="left:83px;top:248.8px;" width="10" height="9" viewBox="0 0 10 9">
<path d="M0.6 7 l1.6 -2.2 l5.6 0 l-1.6 2.2 z" fill="#5b9bd5"/>
<path d="M0.6 5.2 l1.6 -2.2 l5.6 0 l-1.6 2.2 z" fill="#f0a030"/>
<path d="M0.6 3.4 l1.6 -2.2 l5.6 0 l-1.6 2.2 z" fill="#5cb85c"/>
<rect x="3.6" y="4.4" width="4.6" height="3.8" rx="0.6" fill="#fff" stroke="#555" stroke-width="0.6"/><rect x="4.4" y="3.6" width="3" height="1.2" fill="#555"/>
</svg>
<svg class="b" style="left:95.4px;top:248.8px;" width="10" height="9" viewBox="0 0 10 9">
<path d="M7.6 3 a3 3 0 0 0 -5.4 -0.4" fill="none" stroke="#4a86d0" stroke-width="0.9"/><path d="M2.2 5.8 a3 3 0 0 0 5.4 0.4" fill="none" stroke="#4a86d0" stroke-width="0.9"/><path d="M0.4 4.4 h3" stroke="#c060c0" stroke-width="0.9"/><path d="M7.4 1 v2.4 h-2.2" fill="none" stroke="#4a86d0" stroke-width="0.7"/>
</svg>
<svg class="b" style="left:122.8px;top:247px;" width="6" height="12" viewBox="0 0 6 12">
<path d="M0.8 1 l2 1.6 l2 -1.6 M0.8 3 l2 1.6 l2 -1.6" fill="none" stroke="#555" stroke-width="0.6"/><path d="M1.4 8 h2.8 l-1.4 1.7z" fill="#444"/>
</svg>
<svg class="b" style="left:0.8px;top:262.4px;" width="8" height="8" viewBox="0 0 8 8">
<path d="M0.2 6.49 l1.52 -2.09 l5.32 0 l-1.52 2.09 z" fill="#5b9bd5"/>
<path d="M0.2 4.78 l1.52 -2.09 l5.32 0 l-1.52 2.09 z" fill="#f0a030"/>
<path d="M0.2 3.07 l1.52 -2.09 l5.32 0 l-1.52 2.09 z" fill="#5cb85c"/>
</svg>
<span class="t" style="left:10.8px;top:262px;font-size:6.1px;line-height:7px;color:#3e3e3e;letter-spacing:-0.16px;">Vizex</span>
<div class="b " style="left:0px;top:309.2px;width:129.6px;height:9.2px;background:#d9d6e8;"></div>
<svg class="b" style="left:8.2px;top:272.2px" width="6.6" height="6.6" viewBox="0 0 10 10"><rect x="0.6" y="0.6" width="8.8" height="8.8" rx="2" fill="#fdfdfd" stroke="#8a8a8a" stroke-width="1.15"/></svg>
<svg class="b" style="left:16.4px;top:271.6px;" width="8" height="8.4" viewBox="0 0 8 8.4">
<circle cx="1.8" cy="1" r="0.7" fill="none" stroke="#666" stroke-width="0.4"/><path d="M1.8 1.6 v6.4" stroke="#555" stroke-width="0.6"/><rect x="2.2" y="2.9" width="2.6" height="1.3" fill="#4cb84c"/><rect x="2.2" y="4.3" width="4.6" height="1.6" fill="#c455d6"/><rect x="2.2" y="6" width="3.6" height="1.6" fill="#f0903a"/>
</svg>
<span class="t" style="left:26.4px;top:272px;font-size:6.1px;line-height:7px;color:#3e3e3e;letter-spacing:-0.3px;">SiO2 Assays</span>
<svg class="b" style="left:8.2px;top:281.8px" width="6.6" height="6.6" viewBox="0 0 10 10"><rect x="0" y="0" width="10" height="10" rx="2" fill="#0b5cb8"/><path d="M2.4 5.2 l1.9 1.9 l3.4 -3.9" fill="none" stroke="#fff" stroke-width="1.3"/></svg>
<svg class="b" style="left:16.4px;top:281.2px;" width="8" height="8.4" viewBox="0 0 8 8.4">
<circle cx="1.8" cy="1" r="0.7" fill="none" stroke="#666" stroke-width="0.4"/><path d="M1.8 1.6 v6.4" stroke="#555" stroke-width="0.6"/><rect x="2.2" y="2.9" width="2.6" height="1.3" fill="#4cb84c"/><rect x="2.2" y="4.3" width="4.6" height="1.6" fill="#c455d6"/><rect x="2.2" y="6" width="3.6" height="1.6" fill="#f0903a"/>
</svg>
<span class="t" style="left:26.4px;top:281px;font-size:6.1px;line-height:7px;color:#1f1ff0;letter-spacing:-0.37px;">TFe Assays</span>
<svg class="b" style="left:8.2px;top:291.4px" width="6.6" height="6.6" viewBox="0 0 10 10"><rect x="0.6" y="0.6" width="8.8" height="8.8" rx="2" fill="#fdfdfd" stroke="#8a8a8a" stroke-width="1.15"/></svg>
<svg class="b" style="left:16.4px;top:290.8px;" width="8" height="8.4" viewBox="0 0 8 8.4">
<circle cx="1.8" cy="1" r="0.7" fill="none" stroke="#666" stroke-width="0.4"/><path d="M1.8 1.6 v6.4" stroke="#555" stroke-width="0.6"/><rect x="2.4" y="3.4" width="3.4" height="4.4" fill="#7a8a99"/><rect x="3.2" y="4.4" width="1.8" height="1" fill="#5cb85c"/><rect x="3.2" y="6" width="1.8" height="1" fill="#3b82d6"/>
</svg>
<span class="t" style="left:26.4px;top:291px;font-size:6.1px;line-height:7px;color:#3e3e3e;letter-spacing:-0.16px;">RavenGeologyComps</span>
<svg class="b" style="left:3.2px;top:301.6px" width="4" height="6" viewBox="0 0 4 6"><path d="M0.8 0.8 l2 2.2 l-2 2.2" fill="none" stroke="#777" stroke-width="0.7"/></svg>
<svg class="b" style="left:8.2px;top:301px" width="6.6" height="6.6" viewBox="0 0 10 10"><rect x="0.6" y="0.6" width="8.8" height="8.8" rx="2" fill="#fdfdfd" stroke="#8a8a8a" stroke-width="1.15"/></svg>
<svg class="b" style="left:16.4px;top:300.4px;" width="8" height="8.4" viewBox="0 0 8 8.4">
<circle cx="4" cy="4.2" r="3.5" fill="#8796ad" stroke="#5f6f88" stroke-width="0.5"/><path d="M0.6 4.2 h6.8 M4 0.8 v6.8 M1.6 1.8 l4.8 4.8 M6.4 1.8 l-4.8 4.8" stroke="#d6dde8" stroke-width="0.4"/>
</svg>
<span class="t" style="left:26.4px;top:301px;font-size:6.1px;line-height:7px;color:#3e3e3e;letter-spacing:-0.37px;">Raven Fe</span>
<svg class="b" style="left:8.2px;top:310.6px" width="6.6" height="6.6" viewBox="0 0 10 10"><rect x="0" y="0" width="10" height="10" rx="2" fill="#0b5cb8"/><path d="M2.4 5.2 l1.9 1.9 l3.4 -3.9" fill="none" stroke="#fff" stroke-width="1.3"/></svg>
<svg class="b" style="left:16.4px;top:310px;" width="8" height="8.4" viewBox="0 0 8 8.4">
<rect x="0.5" y="0.6" width="2.2" height="2.3" fill="#3b6fd0"/>
<rect x="2.9" y="0.6" width="2.2" height="2.3" fill="#d04040"/>
<rect x="5.3" y="0.6" width="2.2" height="2.3" fill="#d04040"/>
<rect x="0.5" y="3.1" width="2.2" height="2.3" fill="#f0c040"/>
<rect x="2.9" y="3.1" width="2.2" height="2.3" fill="#3b6fd0"/>
<rect x="5.3" y="3.1" width="2.2" height="2.3" fill="#d04040"/>
<rect x="0.5" y="5.6" width="2.2" height="2.3" fill="#f0c040"/>
<rect x="2.9" y="5.6" width="2.2" height="2.3" fill="#f0c040"/>
<rect x="5.3" y="5.6" width="2.2" height="2.3" fill="#5cb85c"/>
</svg>
<span class="t" style="left:26.4px;top:310px;font-size:6.1px;line-height:7px;color:#3e3e3e;letter-spacing:-0.37px;">Raven Fe</span>
<svg class="b" style="left:8.2px;top:320.2px" width="6.6" height="6.6" viewBox="0 0 10 10"><rect x="0.6" y="0.6" width="8.8" height="8.8" rx="2" fill="#fdfdfd" stroke="#8a8a8a" stroke-width="1.15"/></svg>
<svg class="b" style="left:16.4px;top:319.6px;" width="8" height="8.4" viewBox="0 0 8 8.4">
<circle cx="4" cy="4.2" r="3.5" fill="#8796ad" stroke="#5f6f88" stroke-width="0.5"/><path d="M0.6 4.2 h6.8 M4 0.8 v6.8 M1.6 1.8 l4.8 4.8 M6.4 1.8 l-4.8 4.8" stroke="#d6dde8" stroke-width="0.4"/>
</svg>
<span class="t" style="left:26.4px;top:320px;font-size:6.1px;line-height:7px;color:#a9a9a9;letter-spacing:-0.18px;">Raven SiO2 from Fe</span>
<svg class="b" style="left:8.2px;top:329.8px" width="6.6" height="6.6" viewBox="0 0 10 10"><rect x="0.6" y="0.6" width="8.8" height="8.8" rx="2" fill="#fdfdfd" stroke="#8a8a8a" stroke-width="1.15"/></svg>
<svg class="b" style="left:16.4px;top:329.2px;" width="8" height="8.4" viewBox="0 0 8 8.4">
<rect x="0.5" y="0.6" width="2.2" height="2.3" fill="#3b6fd0"/>
<rect x="2.9" y="0.6" width="2.2" height="2.3" fill="#d04040"/>
<rect x="5.3" y="0.6" width="2.2" height="2.3" fill="#d04040"/>
<rect x="0.5" y="3.1" width="2.2" height="2.3" fill="#f0c040"/>
<rect x="2.9" y="3.1" width="2.2" height="2.3" fill="#3b6fd0"/>
<rect x="5.3" y="3.1" width="2.2" height="2.3" fill="#d04040"/>
<rect x="0.5" y="5.6" width="2.2" height="2.3" fill="#f0c040"/>
<rect x="2.9" y="5.6" width="2.2" height="2.3" fill="#f0c040"/>
<rect x="5.3" y="5.6" width="2.2" height="2.3" fill="#5cb85c"/>
</svg>
<span class="t" style="left:26.4px;top:329px;font-size:6.1px;line-height:7px;color:#333;letter-spacing:-0.18px;">Raven SiO2 from Fe</span>
<svg class="b" style="left:8.2px;top:339.4px" width="6.6" height="6.6" viewBox="0 0 10 10"><rect x="0.6" y="0.6" width="8.8" height="8.8" rx="2" fill="#fdfdfd" stroke="#8a8a8a" stroke-width="1.15"/></svg>
<svg class="b" style="left:16.4px;top:338.8px;" width="8" height="8.4" viewBox="0 0 8 8.4">
<rect x="0.5" y="0.6" width="2.2" height="2.3" fill="#3b6fd0"/>
<rect x="2.9" y="0.6" width="2.2" height="2.3" fill="#d04040"/>
<rect x="5.3" y="0.6" width="2.2" height="2.3" fill="#d04040"/>
<rect x="0.5" y="3.1" width="2.2" height="2.3" fill="#f0c040"/>
<rect x="2.9" y="3.1" width="2.2" height="2.3" fill="#3b6fd0"/>
<rect x="5.3" y="3.1" width="2.2" height="2.3" fill="#d04040"/>
<rect x="0.5" y="5.6" width="2.2" height="2.3" fill="#f0c040"/>
<rect x="2.9" y="5.6" width="2.2" height="2.3" fill="#f0c040"/>
<rect x="5.3" y="5.6" width="2.2" height="2.3" fill="#5cb85c"/>
</svg>
<span class="t" style="left:26.4px;top:339px;font-size:6.1px;line-height:7px;color:#a9a9a9;letter-spacing:-0.16px;">Raven Silica Only</span>
<svg class="b" style="left:8.2px;top:349px" width="6.6" height="6.6" viewBox="0 0 10 10"><rect x="0" y="0" width="10" height="10" rx="2" fill="#0b5cb8"/><path d="M2.4 5.2 l1.9 1.9 l3.4 -3.9" fill="none" stroke="#fff" stroke-width="1.3"/></svg>
<svg class="b" style="left:16.4px;top:348.4px;" width="8" height="8.4" viewBox="0 0 8 8.4">
<path d="M2 2 v6 M5.6 2 v6" stroke="#7fb2ea" stroke-width="0.8"/><circle cx="2" cy="1.4" r="0.9" fill="#fff" stroke="#7fb2ea" stroke-width="0.5"/><circle cx="5.6" cy="1.4" r="0.9" fill="#fff" stroke="#7fb2ea" stroke-width="0.5"/>
</svg>
<span class="t" style="left:26.4px;top:349px;font-size:6.1px;line-height:7px;color:#1f1ff0;letter-spacing:-0.18px;">RavenCollars</span>
<div class="b " style="left:131.8px;top:62.7px;width:634.2px;height:11.6px;background:#e6e6e6;"></div>
<div class="b " style="left:131.9px;top:63px;width:36.6px;height:11.3px;background:#fdfdfd;"></div>
<div class="b " style="left:131.9px;top:63px;width:36.6px;height:1.5px;background:#7065a3;"></div>
<svg class="b" style="left:135.6px;top:65.6px;" width="8" height="8" viewBox="0 0 8 8">
<path d="M0.1 6.79 l1.52 -2.09 l5.32 0 l-1.52 2.09 z" fill="#5b9bd5"/>
<path d="M0.1 5.08 l1.52 -2.09 l5.32 0 l-1.52 2.09 z" fill="#f0a030"/>
<path d="M0.1 3.37 l1.52 -2.09 l5.32 0 l-1.52 2.09 z" fill="#5cb85c"/>
</svg>
<span class="t" style="left:144.7px;top:67px;font-size:5.73px;line-height:6px;color:#5d538b;">Vizex</span>
<svg class="b" style="left:161.8px;top:67.2px" width="5" height="5" viewBox="0 0 5 5"><path d="M0.6 0.6 l3.8 3.8 M4.4 0.6 l-3.8 3.8" stroke="#5d538b" stroke-width="0.8"/></svg>
<div class="b " style="left:169.7px;top:64.4px;width:13.4px;height:9.9px;background:#efefef;"></div>
<svg class="b" style="left:171.4px;top:65.4px;" width="10" height="8" viewBox="0 0 10 8">
<path d="M0.6 3 l2.4 -2.2 v1.4 h2.4 v1.6 h-2.4 v1.4z" fill="#3a9a3a"/><rect x="5.2" y="1.2" width="4" height="3.6" fill="#4a86d0"/>
</svg>
<div class="b " style="left:183.6px;top:64.6px;width:0.5px;height:9.4px;background:#cfcfcf;"></div>
<svg class="b" style="left:756px;top:65.6px;" width="10" height="6" viewBox="0 0 10 6">
<path d="M0.6 1.6 h3 l-1.5 1.8z" fill="#555"/><path d="M6.2 0.8 l3.4 3.6 M9.6 0.8 l-3.4 3.6" stroke="#555" stroke-width="0.7"/>
</svg>
<svg class="b" style="left:131.8px;top:74.3px;background:#fff" width="634.2" height="355.5" viewBox="131.8 74.3 634.2 355.5">
<rect x="485.4" y="200.3" width="6.72" height="6.69" fill="#e04a13"/><rect x="485.4" y="206.09" width="6.72" height="6.69" fill="#ca330a"/><rect x="485.4" y="211.88" width="6.72" height="6.69" fill="#cf360b"/><rect x="485.4" y="217.67" width="6.72" height="5.79" fill="#de4913"/><rect x="491.22" y="200.3" width="6.72" height="6.69" fill="#ce360b"/><rect x="491.22" y="206.09" width="6.72" height="6.69" fill="#b61f04"/><rect x="491.22" y="211.88" width="6.72" height="6.69" fill="#b41d04"/><rect x="491.22" y="217.67" width="6.72" height="6.69" fill="#c82e09"/><rect x="491.22" y="223.46" width="6.72" height="5.79" fill="#dd4913"/><rect x="497.04" y="200.3" width="6.72" height="6.69" fill="#cd350a"/><rect x="497.04" y="206.09" width="6.72" height="6.69" fill="#b41d04"/><rect x="497.04" y="211.88" width="6.72" height="6.69" fill="#b41d04"/><rect x="497.04" y="217.67" width="6.72" height="6.69" fill="#b71f04"/><rect x="497.04" y="223.46" width="6.72" height="6.69" fill="#ca3009"/><rect x="497.04" y="229.25" width="6.72" height="5.79" fill="#de4913"/><rect x="502.86" y="200.3" width="6.72" height="6.69" fill="#cb340a"/><rect x="502.86" y="206.09" width="6.72" height="6.69" fill="#b92005"/><rect x="502.86" y="211.88" width="6.72" height="6.69" fill="#b01b03"/><rect x="502.86" y="217.67" width="6.72" height="6.69" fill="#b82005"/><rect x="502.86" y="223.46" width="6.72" height="6.69" fill="#b71f04"/><rect x="502.86" y="229.25" width="6.72" height="6.69" fill="#cc3109"/><rect x="502.86" y="235.04" width="6.72" height="6.69" fill="#c9330a"/><rect x="502.86" y="240.83" width="6.72" height="6.69" fill="#d1380b"/><rect x="502.86" y="246.62" width="6.72" height="6.69" fill="#cc340a"/><rect x="502.86" y="252.41" width="6.72" height="5.79" fill="#de4913"/><rect x="508.68" y="200.3" width="6.72" height="6.69" fill="#ca330a"/><rect x="508.68" y="206.09" width="6.72" height="6.69" fill="#b61e04"/><rect x="508.68" y="211.88" width="6.72" height="6.69" fill="#ae1a03"/><rect x="508.68" y="217.67" width="6.72" height="6.69" fill="#a91602"/><rect x="508.68" y="223.46" width="6.72" height="6.69" fill="#b82005"/><rect x="508.68" y="229.25" width="6.72" height="6.69" fill="#b92005"/><rect x="508.68" y="235.04" width="6.72" height="6.69" fill="#b61f04"/><rect x="508.68" y="240.83" width="6.72" height="6.69" fill="#b82005"/><rect x="508.68" y="246.62" width="6.72" height="6.69" fill="#b41d04"/><rect x="508.68" y="252.41" width="6.72" height="5.79" fill="#ca330a"/><rect x="514.5" y="200.3" width="6.72" height="6.69" fill="#cb340a"/><rect x="514.5" y="206.09" width="6.72" height="6.69" fill="#b92105"/><rect x="514.5" y="211.88" width="6.72" height="6.69" fill="#ab1802"/><rect x="514.5" y="217.67" width="6.72" height="6.69" fill="#aa1702"/><rect x="514.5" y="223.46" width="6.72" height="6.69" fill="#ac1903"/><rect x="514.5" y="229.25" width="6.72" height="6.69" fill="#ab1802"/><rect x="514.5" y="235.04" width="6.72" height="6.69" fill="#aa1702"/><rect x="514.5" y="240.83" width="6.72" height="6.69" fill="#ae1a03"/><rect x="514.5" y="246.62" width="6.72" height="6.69" fill="#b92105"/><rect x="514.5" y="252.41" width="6.72" height="5.79" fill="#cb340a"/><rect x="520.32" y="200.3" width="6.72" height="6.69" fill="#ce360b"/><rect x="520.32" y="206.09" width="6.72" height="6.69" fill="#b82005"/><rect x="520.32" y="211.88" width="6.72" height="6.69" fill="#bb2205"/><rect x="520.32" y="217.67" width="6.72" height="6.69" fill="#ae1a03"/><rect x="520.32" y="223.46" width="6.72" height="6.69" fill="#a51401"/><rect x="520.32" y="229.25" width="6.72" height="6.69" fill="#ab1902"/><rect x="520.32" y="235.04" width="6.72" height="6.69" fill="#a81602"/><rect x="520.32" y="240.83" width="6.72" height="6.69" fill="#ab1802"/><rect x="520.32" y="246.62" width="6.72" height="6.69" fill="#ba2105"/><rect x="520.32" y="252.41" width="6.72" height="5.79" fill="#ca330a"/><rect x="526.14" y="200.3" width="5.82" height="6.69" fill="#e14b13"/><rect x="526.14" y="206.09" width="6.72" height="6.69" fill="#c32b08"/><rect x="526.14" y="211.88" width="6.72" height="6.69" fill="#b92105"/><rect x="526.14" y="217.67" width="6.72" height="6.69" fill="#ae1a03"/><rect x="526.14" y="223.46" width="6.72" height="6.69" fill="#ac1903"/><rect x="526.14" y="229.25" width="6.72" height="6.69" fill="#aa1802"/><rect x="526.14" y="235.04" width="6.72" height="6.69" fill="#aa1702"/><rect x="526.14" y="240.83" width="6.72" height="6.69" fill="#b92105"/><rect x="526.14" y="246.62" width="6.72" height="6.69" fill="#b82005"/><rect x="526.14" y="252.41" width="6.72" height="5.79" fill="#ce360b"/><rect x="531.96" y="206.09" width="6.72" height="6.69" fill="#cd350a"/><rect x="531.96" y="211.88" width="6.72" height="6.69" fill="#bb2205"/><rect x="531.96" y="217.67" width="6.72" height="6.69" fill="#bc2205"/><rect x="531.96" y="223.46" width="6.72" height="6.69" fill="#ab1802"/><rect x="531.96" y="229.25" width="6.72" height="6.69" fill="#ad1a03"/><rect x="531.96" y="235.04" width="6.72" height="6.69" fill="#a81602"/><rect x="531.96" y="240.83" width="6.72" height="6.69" fill="#b92105"/><rect x="531.96" y="246.62" width="6.72" height="6.69" fill="#c92e09"/><rect x="531.96" y="252.41" width="5.82" height="5.79" fill="#e64f14"/><rect x="537.78" y="206.09" width="5.82" height="6.69" fill="#e44e14"/><rect x="537.78" y="211.88" width="6.72" height="6.69" fill="#c62c08"/><rect x="537.78" y="217.67" width="6.72" height="6.69" fill="#b61f04"/><rect x="537.78" y="223.46" width="6.72" height="6.69" fill="#ad1a03"/><rect x="537.78" y="229.25" width="6.72" height="6.69" fill="#a71502"/><rect x="537.78" y="235.04" width="6.72" height="6.69" fill="#b71f04"/><rect x="537.78" y="240.83" width="6.72" height="6.69" fill="#b51d04"/><rect x="537.78" y="246.62" width="6.72" height="5.79" fill="#ca330a"/><rect x="543.6" y="211.88" width="6.72" height="6.69" fill="#ca330a"/><rect x="543.6" y="217.67" width="6.72" height="6.69" fill="#ba2105"/><rect x="543.6" y="223.46" width="6.72" height="6.69" fill="#a81602"/><rect x="543.6" y="229.25" width="6.72" height="6.69" fill="#a91702"/><rect x="543.6" y="235.04" width="6.72" height="6.69" fill="#b71f04"/><rect x="543.6" y="240.83" width="6.72" height="6.69" fill="#cb3009"/><rect x="543.6" y="246.62" width="5.82" height="5.79" fill="#de4913"/><rect x="549.42" y="211.88" width="6.72" height="6.69" fill="#cd350a"/><rect x="549.42" y="217.67" width="6.72" height="6.69" fill="#b82005"/><rect x="549.42" y="223.46" width="6.72" height="6.69" fill="#af1b03"/><rect x="549.42" y="229.25" width="6.72" height="6.69" fill="#ae1b03"/><rect x="549.42" y="235.04" width="6.72" height="6.69" fill="#bb2205"/><rect x="549.42" y="240.83" width="6.72" height="5.79" fill="#cc340a"/><rect x="555.24" y="211.88" width="6.72" height="6.69" fill="#cd350a"/><rect x="555.24" y="217.67" width="6.72" height="6.69" fill="#b61f04"/><rect x="555.24" y="223.46" width="6.72" height="6.69" fill="#bb2205"/><rect x="555.24" y="229.25" width="6.72" height="6.69" fill="#b01b03"/><rect x="555.24" y="235.04" width="6.72" height="6.69" fill="#b41d04"/><rect x="555.24" y="240.83" width="6.72" height="5.79" fill="#cb330a"/><rect x="561.06" y="211.88" width="5.82" height="6.69" fill="#df4a13"/><rect x="561.06" y="217.67" width="6.72" height="6.69" fill="#c52c08"/><rect x="561.06" y="223.46" width="6.72" height="6.69" fill="#b71f04"/><rect x="561.06" y="229.25" width="6.72" height="6.69" fill="#ac1903"/><rect x="561.06" y="235.04" width="6.72" height="6.69" fill="#b51e04"/><rect x="561.06" y="240.83" width="6.72" height="6.69" fill="#c32a08"/><rect x="561.06" y="246.62" width="6.72" height="6.69" fill="#cd350a"/><rect x="561.06" y="252.41" width="6.72" height="5.79" fill="#e04b13"/><rect x="566.88" y="217.67" width="6.72" height="6.69" fill="#ce360b"/><rect x="566.88" y="223.46" width="6.72" height="6.69" fill="#bc2205"/><rect x="566.88" y="229.25" width="6.72" height="6.69" fill="#ad1a03"/><rect x="566.88" y="235.04" width="6.72" height="6.69" fill="#b82005"/><rect x="566.88" y="240.83" width="6.72" height="6.69" fill="#b92005"/><rect x="566.88" y="246.62" width="6.72" height="6.69" fill="#b92105"/><rect x="566.88" y="252.41" width="6.72" height="6.69" fill="#c32b08"/><rect x="566.88" y="258.2" width="6.72" height="6.69" fill="#d1380b"/><rect x="566.88" y="263.99" width="6.72" height="6.69" fill="#d0370b"/><rect x="566.88" y="269.78" width="6.72" height="5.79" fill="#e54e14"/><rect x="572.7" y="211.88" width="6.72" height="6.69" fill="#e44d14"/><rect x="572.7" y="217.67" width="6.72" height="6.69" fill="#c72d08"/><rect x="572.7" y="223.46" width="6.72" height="6.69" fill="#b71f04"/><rect x="572.7" y="229.25" width="6.72" height="6.69" fill="#a81602"/><rect x="572.7" y="235.04" width="6.72" height="6.69" fill="#ad1903"/><rect x="572.7" y="240.83" width="6.72" height="6.69" fill="#a81602"/><rect x="572.7" y="246.62" width="6.72" height="6.69" fill="#b41d04"/><rect x="572.7" y="252.41" width="6.72" height="6.69" fill="#b51e04"/><rect x="572.7" y="258.2" width="6.72" height="6.69" fill="#b41d04"/><rect x="572.7" y="263.99" width="6.72" height="6.69" fill="#b61e04"/><rect x="572.7" y="269.78" width="6.72" height="6.69" fill="#c32b08"/><rect x="572.7" y="275.57" width="6.72" height="6.69" fill="#c9320a"/><rect x="572.7" y="281.36" width="6.72" height="6.69" fill="#ca330a"/><rect x="572.7" y="287.15" width="6.72" height="5.79" fill="#de4913"/><rect x="578.52" y="211.88" width="6.72" height="6.69" fill="#cc350a"/><rect x="578.52" y="217.67" width="6.72" height="6.69" fill="#b31d04"/><rect x="578.52" y="223.46" width="6.72" height="6.69" fill="#bb2205"/><rect x="578.52" y="229.25" width="6.72" height="6.69" fill="#ad1903"/><rect x="578.52" y="235.04" width="6.72" height="6.69" fill="#a31301"/><rect x="578.52" y="240.83" width="6.72" height="6.69" fill="#a91702"/><rect x="578.52" y="246.62" width="6.72" height="6.69" fill="#aa1802"/><rect x="578.52" y="252.41" width="6.72" height="6.69" fill="#aa1802"/><rect x="578.52" y="258.2" width="6.72" height="6.69" fill="#a81602"/><rect x="578.52" y="263.99" width="6.72" height="6.69" fill="#bb2205"/><rect x="578.52" y="269.78" width="6.72" height="6.69" fill="#bc2305"/><rect x="578.52" y="275.57" width="6.72" height="6.69" fill="#b71f04"/><rect x="578.52" y="281.36" width="6.72" height="6.69" fill="#b71f04"/><rect x="578.52" y="287.15" width="6.72" height="5.79" fill="#ca330a"/><rect x="584.34" y="211.88" width="6.72" height="6.69" fill="#ca330a"/><rect x="584.34" y="217.67" width="6.72" height="6.69" fill="#b61f04"/><rect x="584.34" y="223.46" width="6.72" height="6.69" fill="#a91702"/><rect x="584.34" y="229.25" width="6.72" height="6.69" fill="#ae1b03"/><rect x="584.34" y="235.04" width="6.72" height="6.69" fill="#a31301"/><rect x="584.34" y="240.83" width="6.72" height="6.69" fill="#a21201"/><rect x="584.34" y="246.62" width="6.72" height="6.69" fill="#ab1802"/><rect x="584.34" y="252.41" width="6.72" height="6.69" fill="#a71602"/><rect x="584.34" y="258.2" width="6.72" height="6.69" fill="#a81602"/><rect x="584.34" y="263.99" width="6.72" height="6.69" fill="#ac1903"/><rect x="584.34" y="269.78" width="6.72" height="6.69" fill="#a71602"/><rect x="584.34" y="275.57" width="6.72" height="6.69" fill="#ac1903"/><rect x="584.34" y="281.36" width="6.72" height="6.69" fill="#bc2305"/><rect x="584.34" y="287.15" width="6.72" height="6.69" fill="#cb3009"/><rect x="584.34" y="292.94" width="6.72" height="5.79" fill="#e34d14"/><rect x="590.16" y="206.09" width="6.72" height="6.69" fill="#df4a13"/><rect x="590.16" y="211.88" width="6.72" height="6.69" fill="#c62d08"/><rect x="590.16" y="217.67" width="6.72" height="6.69" fill="#b51d04"/><rect x="590.16" y="223.46" width="6.72" height="6.69" fill="#ae1a03"/><rect x="590.16" y="229.25" width="6.72" height="6.69" fill="#a71602"/><rect x="590.16" y="235.04" width="6.72" height="6.69" fill="#a91702"/><rect x="590.16" y="240.83" width="6.72" height="6.69" fill="#a21301"/><rect x="590.16" y="246.62" width="6.72" height="6.69" fill="#a11301"/><rect x="590.16" y="252.41" width="6.72" height="6.69" fill="#a91702"/><rect x="590.16" y="258.2" width="6.72" height="6.69" fill="#ab1902"/><rect x="590.16" y="263.99" width="6.72" height="6.69" fill="#aa1802"/><rect x="590.16" y="269.78" width="6.72" height="6.69" fill="#a91702"/><rect x="590.16" y="275.57" width="6.72" height="6.69" fill="#ae1b03"/><rect x="590.16" y="281.36" width="6.72" height="6.69" fill="#ba2105"/><rect x="590.16" y="287.15" width="6.72" height="6.69" fill="#b51e04"/><rect x="590.16" y="292.94" width="6.72" height="6.69" fill="#c82e09"/><rect x="590.16" y="298.73" width="6.72" height="6.69" fill="#cc350a"/><rect x="590.16" y="304.52" width="6.72" height="5.79" fill="#dd4913"/><rect x="595.98" y="206.09" width="6.72" height="6.69" fill="#c9330a"/><rect x="595.98" y="211.88" width="6.72" height="6.69" fill="#b61e04"/><rect x="595.98" y="217.67" width="6.72" height="6.69" fill="#b51e04"/><rect x="595.98" y="223.46" width="6.72" height="6.69" fill="#ad1a03"/><rect x="595.98" y="229.25" width="6.72" height="6.69" fill="#ab1802"/><rect x="595.98" y="235.04" width="6.72" height="6.69" fill="#a31401"/><rect x="595.98" y="240.83" width="6.72" height="6.69" fill="#a71702"/><rect x="595.98" y="246.62" width="6.72" height="6.69" fill="#a81802"/><rect x="595.98" y="252.41" width="6.72" height="6.69" fill="#a81702"/><rect x="595.98" y="258.2" width="6.72" height="6.69" fill="#a21401"/><rect x="595.98" y="263.99" width="6.72" height="6.69" fill="#a11301"/><rect x="595.98" y="269.78" width="6.72" height="6.69" fill="#a41401"/><rect x="595.98" y="275.57" width="6.72" height="6.69" fill="#a91702"/><rect x="595.98" y="281.36" width="6.72" height="6.69" fill="#a91702"/><rect x="595.98" y="287.15" width="6.72" height="6.69" fill="#b92005"/><rect x="595.98" y="292.94" width="6.72" height="6.69" fill="#bb2205"/><rect x="595.98" y="298.73" width="6.72" height="6.69" fill="#bb2205"/><rect x="595.98" y="304.52" width="6.72" height="6.69" fill="#c72d08"/><rect x="595.98" y="310.31" width="5.82" height="5.79" fill="#e34c14"/><rect x="601.8" y="206.09" width="6.72" height="6.69" fill="#d0370b"/><rect x="601.8" y="211.88" width="6.72" height="6.69" fill="#b41d04"/><rect x="601.8" y="217.67" width="6.72" height="6.69" fill="#ad1a03"/><rect x="601.8" y="223.46" width="6.72" height="6.69" fill="#af1b03"/><rect x="601.8" y="229.25" width="6.72" height="6.69" fill="#a91702"/><rect x="601.8" y="235.04" width="6.72" height="6.69" fill="#a91702"/><rect x="601.8" y="240.83" width="6.72" height="6.69" fill="#a31401"/><rect x="601.8" y="246.62" width="6.72" height="6.69" fill="#a11201"/><rect x="601.8" y="252.41" width="6.72" height="6.69" fill="#a41502"/><rect x="601.8" y="258.2" width="6.72" height="6.69" fill="#a01201"/><rect x="601.8" y="263.99" width="6.72" height="6.69" fill="#a61602"/><rect x="601.8" y="269.78" width="6.72" height="6.69" fill="#ab1802"/><rect x="601.8" y="275.57" width="6.72" height="6.69" fill="#a61501"/><rect x="601.8" y="281.36" width="6.72" height="6.69" fill="#ab1802"/><rect x="601.8" y="287.15" width="6.72" height="6.69" fill="#bc2205"/><rect x="601.8" y="292.94" width="6.72" height="6.69" fill="#ba2105"/><rect x="601.8" y="298.73" width="6.72" height="6.69" fill="#c52b08"/><rect x="601.8" y="304.52" width="5.82" height="5.79" fill="#de4913"/><rect x="607.62" y="206.09" width="6.72" height="6.69" fill="#ca330a"/><rect x="607.62" y="211.88" width="6.72" height="6.69" fill="#bb2205"/><rect x="607.62" y="217.67" width="6.72" height="6.69" fill="#ba2105"/><rect x="607.62" y="223.46" width="6.72" height="6.69" fill="#a81602"/><rect x="607.62" y="229.25" width="6.72" height="6.69" fill="#ae1b03"/><rect x="607.62" y="235.04" width="6.72" height="6.69" fill="#ab1902"/><rect x="607.62" y="240.83" width="6.72" height="6.69" fill="#a81602"/><rect x="607.62" y="246.62" width="6.72" height="6.69" fill="#a21401"/><rect x="607.62" y="252.41" width="6.72" height="6.69" fill="#a41502"/><rect x="607.62" y="258.2" width="6.72" height="6.69" fill="#9e1101"/><rect x="607.62" y="263.99" width="6.72" height="6.69" fill="#9f1101"/><rect x="607.62" y="269.78" width="6.72" height="6.69" fill="#ab1802"/><rect x="607.62" y="275.57" width="6.72" height="6.69" fill="#ad1903"/><rect x="607.62" y="281.36" width="6.72" height="6.69" fill="#ac1903"/><rect x="607.62" y="287.15" width="6.72" height="6.69" fill="#bb2205"/><rect x="607.62" y="292.94" width="6.72" height="6.69" fill="#c72d08"/><rect x="607.62" y="298.73" width="5.82" height="5.79" fill="#e54e14"/><rect x="613.44" y="206.09" width="5.82" height="6.69" fill="#e44e14"/><rect x="613.44" y="211.88" width="6.72" height="6.69" fill="#c52c08"/><rect x="613.44" y="217.67" width="6.72" height="6.69" fill="#b51e04"/><rect x="613.44" y="223.46" width="6.72" height="6.69" fill="#b61e04"/><rect x="613.44" y="229.25" width="6.72" height="6.69" fill="#a91702"/><rect x="613.44" y="235.04" width="6.72" height="6.69" fill="#ac1903"/><rect x="613.44" y="240.83" width="6.72" height="6.69" fill="#a41401"/><rect x="613.44" y="246.62" width="6.72" height="6.69" fill="#a61501"/><rect x="613.44" y="252.41" width="6.72" height="6.69" fill="#a01201"/><rect x="613.44" y="258.2" width="6.72" height="6.69" fill="#a51602"/><rect x="613.44" y="263.99" width="6.72" height="6.69" fill="#a21401"/><rect x="613.44" y="269.78" width="6.72" height="6.69" fill="#a61501"/><rect x="613.44" y="275.57" width="6.72" height="6.69" fill="#ac1903"/><rect x="613.44" y="281.36" width="6.72" height="6.69" fill="#bb2205"/><rect x="613.44" y="287.15" width="6.72" height="6.69" fill="#b71f04"/><rect x="613.44" y="292.94" width="6.72" height="5.79" fill="#d1380b"/><rect x="619.26" y="211.88" width="5.82" height="6.69" fill="#e24c14"/><rect x="619.26" y="217.67" width="6.72" height="6.69" fill="#c82e09"/><rect x="619.26" y="223.46" width="6.72" height="6.69" fill="#b82005"/><rect x="619.26" y="229.25" width="6.72" height="6.69" fill="#b31c04"/><rect x="619.26" y="235.04" width="6.72" height="6.69" fill="#ab1802"/><rect x="619.26" y="240.83" width="6.72" height="6.69" fill="#a91702"/><rect x="619.26" y="246.62" width="6.72" height="6.69" fill="#a21201"/><rect x="619.26" y="252.41" width="6.72" height="6.69" fill="#a61602"/><rect x="619.26" y="258.2" width="6.72" height="6.69" fill="#a11201"/><rect x="619.26" y="263.99" width="6.72" height="6.69" fill="#a31401"/><rect x="619.26" y="269.78" width="6.72" height="6.69" fill="#a91702"/><rect x="619.26" y="275.57" width="6.72" height="6.69" fill="#ac1903"/><rect x="619.26" y="281.36" width="6.72" height="6.69" fill="#b61e04"/><rect x="619.26" y="287.15" width="6.72" height="6.69" fill="#c82e09"/><rect x="619.26" y="292.94" width="5.82" height="5.79" fill="#e24c14"/><rect x="625.08" y="217.67" width="5.82" height="6.69" fill="#e44d14"/><rect x="625.08" y="223.46" width="6.72" height="6.69" fill="#c42b08"/><rect x="625.08" y="229.25" width="6.72" height="6.69" fill="#b82005"/><rect x="625.08" y="235.04" width="6.72" height="6.69" fill="#b51e04"/><rect x="625.08" y="240.83" width="6.72" height="6.69" fill="#a91702"/><rect x="625.08" y="246.62" width="6.72" height="6.69" fill="#a91702"/><rect x="625.08" y="252.41" width="6.72" height="6.69" fill="#a71602"/><rect x="625.08" y="258.2" width="6.72" height="6.69" fill="#a41502"/><rect x="625.08" y="263.99" width="6.72" height="6.69" fill="#a61602"/><rect x="625.08" y="269.78" width="6.72" height="6.69" fill="#aa1802"/><rect x="625.08" y="275.57" width="6.72" height="6.69" fill="#ab1802"/><rect x="625.08" y="281.36" width="6.72" height="6.69" fill="#b92005"/><rect x="625.08" y="287.15" width="6.72" height="5.79" fill="#ce360b"/><rect x="630.9" y="223.46" width="5.82" height="6.69" fill="#e24c14"/><rect x="630.9" y="229.25" width="6.72" height="6.69" fill="#c92f09"/><rect x="630.9" y="235.04" width="6.72" height="6.69" fill="#b71f04"/><rect x="630.9" y="240.83" width="6.72" height="6.69" fill="#ac1903"/><rect x="630.9" y="246.62" width="6.72" height="6.69" fill="#ab1802"/><rect x="630.9" y="252.41" width="6.72" height="6.69" fill="#aa1802"/><rect x="630.9" y="258.2" width="6.72" height="6.69" fill="#a81702"/><rect x="630.9" y="263.99" width="6.72" height="6.69" fill="#aa1802"/><rect x="630.9" y="269.78" width="6.72" height="6.69" fill="#aa1802"/><rect x="630.9" y="275.57" width="6.72" height="6.69" fill="#a91702"/><rect x="630.9" y="281.36" width="6.72" height="6.69" fill="#b82005"/><rect x="630.9" y="287.15" width="6.72" height="5.79" fill="#d1380b"/><rect x="636.72" y="229.25" width="6.72" height="6.69" fill="#d1380b"/><rect x="636.72" y="235.04" width="6.72" height="6.69" fill="#b41d04"/><rect x="636.72" y="240.83" width="6.72" height="6.69" fill="#b41d04"/><rect x="636.72" y="246.62" width="6.72" height="6.69" fill="#ab1802"/><rect x="636.72" y="252.41" width="6.72" height="6.69" fill="#a31301"/><rect x="636.72" y="258.2" width="6.72" height="6.69" fill="#a41401"/><rect x="636.72" y="263.99" width="6.72" height="6.69" fill="#a81602"/><rect x="636.72" y="269.78" width="6.72" height="6.69" fill="#ad1a03"/><rect x="636.72" y="275.57" width="6.72" height="6.69" fill="#ae1a03"/><rect x="636.72" y="281.36" width="6.72" height="6.69" fill="#bb2205"/><rect x="636.72" y="287.15" width="6.72" height="5.79" fill="#ca330a"/><rect x="642.54" y="229.25" width="5.82" height="6.69" fill="#e34d14"/><rect x="642.54" y="235.04" width="6.72" height="6.69" fill="#c92f09"/><rect x="642.54" y="240.83" width="6.72" height="6.69" fill="#b41d04"/><rect x="642.54" y="246.62" width="6.72" height="6.69" fill="#af1b03"/><rect x="642.54" y="252.41" width="6.72" height="6.69" fill="#ab1802"/><rect x="642.54" y="258.2" width="6.72" height="6.69" fill="#a41401"/><rect x="642.54" y="263.99" width="6.72" height="6.69" fill="#b01b03"/><rect x="642.54" y="269.78" width="6.72" height="6.69" fill="#b71f04"/><rect x="642.54" y="275.57" width="6.72" height="6.69" fill="#b71f04"/><rect x="642.54" y="281.36" width="6.72" height="6.69" fill="#bc2305"/><rect x="642.54" y="287.15" width="6.72" height="5.79" fill="#d0380b"/><rect x="648.36" y="235.04" width="6.72" height="6.69" fill="#ca330a"/><rect x="648.36" y="240.83" width="6.72" height="6.69" fill="#b71f04"/><rect x="648.36" y="246.62" width="6.72" height="6.69" fill="#ac1903"/><rect x="648.36" y="252.41" width="6.72" height="6.69" fill="#a51401"/><rect x="648.36" y="258.2" width="6.72" height="6.69" fill="#a41401"/><rect x="648.36" y="263.99" width="6.72" height="6.69" fill="#aa1702"/><rect x="648.36" y="269.78" width="6.72" height="6.69" fill="#b92105"/><rect x="648.36" y="275.57" width="6.72" height="6.69" fill="#c32a08"/><rect x="648.36" y="281.36" width="5.82" height="6.69" fill="#ce360b"/><rect x="648.36" y="287.15" width="5.82" height="5.79" fill="#e14b13"/><rect x="651.2" y="235.04" width="9.7" height="6.69" fill="#c9320a"/><rect x="651.2" y="240.83" width="9.7" height="6.69" fill="#b61e04"/><rect x="651.2" y="246.62" width="9.7" height="6.69" fill="#ad1903"/><rect x="651.2" y="252.41" width="9.7" height="6.69" fill="#ac1903"/><rect x="651.2" y="258.2" width="9.7" height="6.69" fill="#a81602"/><rect x="651.2" y="263.99" width="9.7" height="6.69" fill="#b01c03"/><rect x="651.2" y="269.78" width="9.7" height="6.69" fill="#ba2105"/><rect x="651.2" y="275.57" width="9.7" height="5.79" fill="#d2380b"/><rect x="660" y="235.04" width="6.72" height="6.69" fill="#ca330a"/><rect x="660" y="240.83" width="6.72" height="6.69" fill="#b51e04"/><rect x="660" y="246.62" width="6.72" height="6.69" fill="#b31d04"/><rect x="660" y="252.41" width="6.72" height="6.69" fill="#ae1a03"/><rect x="660" y="258.2" width="6.72" height="6.69" fill="#a91702"/><rect x="660" y="263.99" width="6.72" height="6.69" fill="#b41d04"/><rect x="660" y="269.78" width="6.72" height="6.69" fill="#b71f04"/><rect x="660" y="275.57" width="6.72" height="5.79" fill="#d1380b"/><rect x="665.82" y="235.04" width="5.82" height="6.69" fill="#e44e14"/><rect x="665.82" y="240.83" width="6.72" height="6.69" fill="#c52c08"/><rect x="665.82" y="246.62" width="6.72" height="6.69" fill="#b41d04"/><rect x="665.82" y="252.41" width="6.72" height="6.69" fill="#bb2205"/><rect x="665.82" y="258.2" width="6.72" height="6.69" fill="#ac1903"/><rect x="665.82" y="263.99" width="6.72" height="6.69" fill="#b92105"/><rect x="665.82" y="269.78" width="6.72" height="6.69" fill="#c42b08"/><rect x="665.82" y="275.57" width="5.82" height="5.79" fill="#de4913"/><rect x="671.64" y="240.83" width="5.82" height="6.69" fill="#e34d14"/><rect x="671.64" y="246.62" width="6.72" height="6.69" fill="#c72d08"/><rect x="671.64" y="252.41" width="6.72" height="6.69" fill="#b41d04"/><rect x="671.64" y="258.2" width="6.72" height="6.69" fill="#bb2205"/><rect x="671.64" y="263.99" width="6.72" height="6.69" fill="#b92005"/><rect x="671.64" y="269.78" width="6.72" height="5.79" fill="#d0370b"/><rect x="677.46" y="246.62" width="5.82" height="6.69" fill="#de4913"/><rect x="677.46" y="252.41" width="6.72" height="6.69" fill="#cb3009"/><rect x="677.46" y="258.2" width="6.72" height="6.69" fill="#b41d04"/><rect x="677.46" y="263.99" width="6.72" height="6.69" fill="#bb2205"/><rect x="677.46" y="269.78" width="6.72" height="5.79" fill="#cd350a"/><rect x="683.28" y="252.41" width="5.82" height="6.69" fill="#e04a13"/><rect x="683.28" y="258.2" width="6.72" height="6.69" fill="#c82e09"/><rect x="683.28" y="263.99" width="6.72" height="6.69" fill="#bb2205"/><rect x="683.28" y="269.78" width="6.72" height="5.79" fill="#cb340a"/><rect x="689.1" y="258.2" width="5.82" height="6.69" fill="#de4913"/><rect x="689.1" y="263.99" width="5.82" height="6.69" fill="#ce360b"/><rect x="689.1" y="269.78" width="5.82" height="5.79" fill="#df4a13"/>
<rect x="520.32" y="356.63" width="5.82" height="5.79" fill="#ee5a14"/>
<rect x="497.04" y="368.21" width="5.82" height="5.79" fill="#e8500f"/>
<rect x="491.22" y="374" width="5.82" height="5.79" fill="#e24a0e"/>
<rect x="497.04" y="374" width="5.82" height="5.79" fill="#e8500f"/>
<rect x="485.4" y="379.79" width="5.82" height="5.79" fill="#e04a0e"/>
<rect x="501.8" y="196.3" width="17.8" height="1.2" fill="#f8b030"/><rect x="501.8" y="197.5" width="17.8" height="2.1" fill="#f07a18"/><rect x="501.8" y="199.6" width="17.8" height="3.4" fill="#d8400c"/><rect x="501.8" y="203" width="17.8" height="3" fill="#c83008"/><rect x="501.8" y="206" width="17.8" height="3" fill="#b02004"/><rect x="501.8" y="209" width="17.8" height="1.2" fill="#c42c06"/><rect x="500.8" y="210.2" width="18.8" height="1.8" fill="#a81a02"/><rect x="501.8" y="212" width="17.8" height="4" fill="#c83008"/><rect x="501.8" y="216" width="17.8" height="3" fill="#b82404"/><rect x="501.8" y="219" width="17.8" height="1.4" fill="#cc3408"/><rect x="501.8" y="220.4" width="17.8" height="1.6" fill="#b42004"/><rect x="501.8" y="222" width="17.8" height="5" fill="#c02806"/><rect x="501.8" y="227" width="17.8" height="1.2" fill="#d03a0a"/><rect x="501.8" y="228.2" width="17.8" height="3.8" fill="#bc2404"/><rect x="501.8" y="232" width="17.8" height="4" fill="#c42a06"/><rect x="501.8" y="236" width="17.8" height="4" fill="#cc3208"/><rect x="501.8" y="240" width="17.8" height="3.6" fill="#c42a06"/><rect x="500.6" y="243.6" width="19" height="2.4" fill="#a81a04"/><rect x="501.8" y="246" width="17.8" height="2" fill="#c83008"/><rect x="500.8" y="248" width="18.8" height="2.6" fill="#aa1a02"/><rect x="501.8" y="250.6" width="17.8" height="1.8" fill="#d8440c"/><rect x="501.8" y="252.4" width="17.8" height="4.8" fill="#f0801c"/><rect x="501.8" y="257.2" width="17.8" height="1" fill="#e05a12"/><rect x="500.8" y="258.2" width="18.8" height="6.2" fill="#b01c04"/><rect x="501.8" y="264.4" width="17.8" height="1" fill="#f07a18"/><rect x="501.8" y="265.4" width="17.8" height="1" fill="#f0d030"/><rect x="501.8" y="266.4" width="17.8" height="3.6" fill="#a8f050"/><rect x="501.8" y="270" width="17.8" height="5" fill="#58f070"/><rect x="501.8" y="275" width="17.8" height="1.1" fill="#e0e030"/><rect x="500.6" y="276.1" width="19" height="1.5" fill="#e04010"/><rect x="501.8" y="278.1" width="17.8" height="3.5" fill="#f8a020"/><rect x="501.8" y="281.8" width="17.8" height="2.4" fill="#c8f040"/><rect x="502.6" y="284.4" width="17" height="2.4" fill="#30e890"/><rect x="502.8" y="288" width="16.8" height="2.7" fill="#20d8a8"/><rect x="503.6" y="304.2" width="16" height="2.3" fill="#60f060"/><rect x="502.6" y="306.7" width="17" height="1.8" fill="#e8d820"/><rect x="503.8" y="309.5" width="15.8" height="1.5" fill="#40e0a0"/><rect x="501.8" y="311.7" width="17.8" height="4.5" fill="#f06a14"/><rect x="500.4" y="316.2" width="19.2" height="3.6" fill="#a01000"/><rect x="501.2" y="319.8" width="18.4" height="7.2" fill="#e04a0c"/><rect x="502.4" y="327" width="17.2" height="2.5" fill="#f89020"/><rect x="503.6" y="329.5" width="16" height="1.5" fill="#40e0b0"/><rect x="503.4" y="334.5" width="16.2" height="1.7" fill="#30e0a0"/><rect x="501.2" y="336.3" width="18.4" height="1.2" fill="#f07010"/><rect x="503.6" y="337.7" width="16" height="3" fill="#50f060"/><rect x="500.8" y="342.7" width="18.8" height="1.6" fill="#b01800"/><rect x="501.8" y="344.3" width="17.8" height="4.5" fill="#f8901c"/><rect x="502.4" y="348.8" width="17.2" height="2.7" fill="#f0c020"/><rect x="503" y="351.5" width="16.6" height="2.7" fill="#b0f040"/><rect x="501.8" y="354.5" width="17.8" height="3.5" fill="#e85010"/><rect x="500.8" y="358" width="18.8" height="2" fill="#b81c00"/><rect x="501.8" y="360" width="17.8" height="2" fill="#e04810"/><rect x="500.8" y="362" width="18.8" height="2.6" fill="#a81400"/><rect x="501.8" y="364.6" width="17.8" height="3.4" fill="#e04810"/><rect x="501.8" y="368.6" width="17.8" height="2" fill="#f89020"/><rect x="501.8" y="370.6" width="17.8" height="1.3" fill="#d83008"/><rect x="502.4" y="372.5" width="17.2" height="0.7" fill="#b8f040"/><rect x="502.4" y="373.2" width="17.2" height="1.3" fill="#40e0a0"/><rect x="502.4" y="374.5" width="17.2" height="4.5" fill="#b8f040"/><rect x="502" y="379.8" width="17.6" height="2" fill="#f07818"/><rect x="503.4" y="382.4" width="16.2" height="4.6" fill="#58f058"/><rect x="503.8" y="389" width="15.8" height="1.6" fill="#40e880"/>
<rect x="635" y="201.9" width="15.4" height="4.3" fill="#30e0a0"/><rect x="635" y="207.5" width="15.4" height="1.3" fill="#50f080"/><rect x="635" y="208.8" width="15.4" height="1.2" fill="#c8f8d8"/><rect x="635" y="210" width="15.4" height="3.4" fill="#30e098"/><rect x="635" y="213.4" width="15.4" height="0.6" fill="#c0f8d0"/><rect x="634.8" y="214" width="15.6" height="3" fill="#58f070"/><rect x="634.8" y="217" width="15.6" height="0.8" fill="#a8f8a0"/><rect x="634.6" y="217.8" width="15.8" height="2.9" fill="#58f070"/><rect x="634" y="220.7" width="16.4" height="2.3" fill="#b0f048"/><rect x="633.6" y="223" width="16.8" height="1.1" fill="#f0a030"/><rect x="633.8" y="224.1" width="16.6" height="2.5" fill="#b8f040"/><rect x="633.6" y="226.6" width="16.8" height="2.4" fill="#f0d030"/><rect x="633.4" y="229" width="17" height="3.5" fill="#f8b828"/><rect x="632.6" y="232.5" width="17.8" height="1.1" fill="#e86014"/><rect x="632" y="233.6" width="18.4" height="12.4" fill="#ae1c04"/><rect x="632" y="239" width="18.4" height="1.4" fill="#a01402"/><rect x="632" y="246" width="18.4" height="1.2" fill="#e85c10"/><rect x="632" y="247.2" width="18.4" height="12.3" fill="#aa1a03"/><rect x="632" y="252" width="18.4" height="1.2" fill="#c42c06"/><rect x="632" y="259.5" width="18.4" height="1.5" fill="#981002"/><rect x="632" y="261" width="18.4" height="5" fill="#a81802"/><rect x="632" y="266" width="18.4" height="2" fill="#8c0c00"/><rect x="632" y="268" width="18.4" height="9.8" fill="#a41602"/><rect x="632" y="272" width="18.4" height="1" fill="#981002"/><rect x="632" y="277.8" width="18.4" height="1.7" fill="#e86414"/><rect x="632" y="279.5" width="18.4" height="4" fill="#ae1c04"/><rect x="632.6" y="283.5" width="17.8" height="1.1" fill="#f07a18"/><rect x="633" y="284.6" width="17.4" height="1.4" fill="#f0b828"/><rect x="633.6" y="286" width="16.8" height="8.5" fill="#e8e030"/><rect x="634.2" y="294.5" width="16.2" height="3" fill="#40e070"/><rect x="634.6" y="297.5" width="15.8" height="2.5" fill="#b0f8e0"/><rect x="633.4" y="300.5" width="17" height="3" fill="#c0f040"/><rect x="634.6" y="303.5" width="15.8" height="2.5" fill="#50f080"/><rect x="633.4" y="306" width="17" height="2.7" fill="#f0c030"/><rect x="634.8" y="311" width="15.6" height="7" fill="#38e898"/><rect x="633.8" y="318" width="16.6" height="2.5" fill="#a8f048"/><rect x="634.6" y="323" width="15.8" height="4" fill="#50f070"/><rect x="634.6" y="329.8" width="15.8" height="2.2" fill="#60f060"/><rect x="633" y="332" width="17.4" height="2" fill="#f08820"/><rect x="634" y="334" width="16.4" height="1" fill="#b8f040"/><rect x="635" y="335" width="15.4" height="1.6" fill="#30e0a0"/>
<path d="M519.9 138.6 V258.4" stroke="#1c1c74" stroke-width="1.55" fill="none"/><path d="M519.9 258.4 V394.8" stroke="#3c4288" stroke-width="0.95" fill="none"/><circle cx="519.8" cy="138.6" r="2" fill="#0c0c5a"/>
<path d="M650.8 121.8 V348.3" stroke="#1c1c74" stroke-width="1.55" fill="none"/><circle cx="650.8" cy="121.8" r="2" fill="#0c0c5a"/>
<polygon points="458.3,404.9 458.8,406.73 441.06,411.61 440.56,409.78" fill="#f05a20"/>
<polygon points="458.8,406.73 459.15,407.99 442.18,412.65 441.83,411.4" fill="#e8e040"/>
<polygon points="459.2,408.18 459.57,409.53 442.79,414.14 442.42,412.79" fill="#f8f8e8"/>
<polygon points="459.52,409.34 459.86,410.59 443.09,415.2 442.74,413.95" fill="#f06824"/>
<polygon points="459.86,410.59 461.48,416.47 445.67,420.82 444.05,414.94" fill="#50f060"/>
<polygon points="461.48,416.47 462.17,418.98 446.55,423.27 445.86,420.76" fill="#f8c030"/>
<polygon points="462.17,418.98 462.59,420.52 447.55,424.66 447.13,423.11" fill="#60e880"/>
<polygon points="462.59,420.52 463.12,422.45 449.05,426.32 448.52,424.39" fill="#30e0a0"/>
<polygon points="463.28,423.03 463.44,423.61 449.94,427.32 449.78,426.74" fill="#d8fbe8"/>
<polygon points="463.44,423.61 464.45,427.27 451.34,430.88 450.33,427.21" fill="#30e8a0"/>
<path d="M458.3 404.9 L465.2 430" stroke="#26267a" stroke-width="1.2" fill="none"/>
<path d="M136.9 74.3 V429.8 M165.95 74.3 V429.8 M195 74.3 V429.8 M224.05 74.3 V429.8 M282.15 74.3 V429.8 M311.2 74.3 V429.8 M340.25 74.3 V429.8 M369.3 74.3 V429.8 M427.4 74.3 V429.8 M456.45 74.3 V429.8 M485.5 74.3 V429.8 M514.55 74.3 V429.8 M572.65 74.3 V429.8 M601.7 74.3 V429.8 M630.75 74.3 V429.8 M659.8 74.3 V429.8 M717.9 74.3 V429.8 M746.95 74.3 V429.8 M131.8 93.6 H766 M131.8 122.65 H766 M131.8 180.75 H766 M131.8 209.8 H766 M131.8 238.85 H766 M131.8 267.9 H766 M131.8 326 H766 M131.8 355.05 H766 M131.8 384.1 H766 M131.8 413.15 H766" fill="none" stroke="rgba(90,90,90,0.22)" stroke-width="0.6" stroke-dasharray="1 0.6"/>
<path d="M131.8 151.7 H766 M131.8 296.95 H766" stroke="rgba(95,95,95,0.5)" stroke-width="0.9" fill="none"/>
<path d="M253.5 74.3 V429.8 M398.5 74.3 V429.8 M543.5 74.3 V429.8 M688.5 74.3 V429.8" stroke="rgba(35,35,35,0.75)" stroke-width="0.9" fill="none"/>
<text x="541.2" y="97" font-size="5.3" fill="#555" transform="rotate(-90 541.2 97)" font-family="Liberation Sans, sans-serif">19,250X</text>
<text x="686.2" y="97" font-size="5.3" fill="#555" transform="rotate(-90 686.2 97)" font-family="Liberation Sans, sans-serif">19,500X</text>
<text x="250.8" y="427" font-size="5.3" fill="#555" transform="rotate(-90 250.8 427)" font-family="Liberation Sans, sans-serif">18,750X</text>
<text x="396" y="427" font-size="5.3" fill="#555" transform="rotate(-90 396 427)" font-family="Liberation Sans, sans-serif">19,000X</text>
<text x="541.2" y="427" font-size="5.3" fill="#555" transform="rotate(-90 541.2 427)" font-family="Liberation Sans, sans-serif">19,250X</text>
<text x="686.2" y="427" font-size="5.3" fill="#555" transform="rotate(-90 686.2 427)" font-family="Liberation Sans, sans-serif">19,500X</text>
<text x="765.6" y="148.9" font-size="5.3" fill="#555" text-anchor="end" font-family="Liberation Sans, sans-serif">0Z</text>
<text x="765.6" y="294.1" font-size="5.3" fill="#555" text-anchor="end" font-family="Liberation Sans, sans-serif">-250Z</text>
<text x="135.4" y="148.9" font-size="5.3" fill="#555" font-family="Liberation Sans, sans-serif">0Z</text>
<text x="135.8" y="294.1" font-size="5.3" fill="#555" font-family="Liberation Sans, sans-serif">-250Z</text>
<rect x="152.2" y="395" width="2.9" height="12" fill="#10109a"/><path d="M150.9 395.8 L153.65 390.4 L156.4 395.8z" fill="#0a0a78"/>
<rect x="153.6" y="406" width="11.6" height="2.6" fill="#c01010"/><path d="M164.6 404.6 L170.4 407.3 L164.6 410z" fill="#a00c0c"/>
<circle cx="153.6" cy="407.3" r="2.1" fill="#10b020"/>
<rect x="691.4" y="408.1" width="58" height="4" fill="#fff" stroke="#222" stroke-width="0.3"/>
<rect x="691.4" y="408.1" width="58" height="2" fill="#cfcfcf"/>
<rect x="691.4" y="408.1" width="5.8" height="2" fill="#000"/>
<rect x="703" y="408.1" width="11.6" height="2" fill="#000"/>
<rect x="726.2" y="408.1" width="11.6" height="2" fill="#000"/>
<rect x="697.2" y="410.1" width="5.8" height="2" fill="#000"/>
<rect x="714.6" y="410.1" width="11.6" height="2" fill="#000"/>
<rect x="737.8" y="410.1" width="11.6" height="2" fill="#000"/>
<path d="M691.4 412.2 v2.6" stroke="#555" stroke-width="0.5"/>
<text x="691.4" y="421.4" font-size="4.8" fill="#333" text-anchor="middle" font-family="Liberation Sans, sans-serif">20</text>
<path d="M703 412.2 v2.6" stroke="#555" stroke-width="0.5"/>
<text x="703" y="421.4" font-size="4.8" fill="#333" text-anchor="middle" font-family="Liberation Sans, sans-serif">0</text>
<path d="M714.6 412.2 v2.6" stroke="#555" stroke-width="0.5"/>
<text x="714.6" y="421.4" font-size="4.8" fill="#333" text-anchor="middle" font-family="Liberation Sans, sans-serif">20</text>
<path d="M726.2 412.2 v2.6" stroke="#555" stroke-width="0.5"/>
<text x="726.2" y="421.4" font-size="4.8" fill="#333" text-anchor="middle" font-family="Liberation Sans, sans-serif">40</text>
<path d="M737.8 412.2 v2.6" stroke="#555" stroke-width="0.5"/>
<text x="737.8" y="421.4" font-size="4.8" fill="#333" text-anchor="middle" font-family="Liberation Sans, sans-serif">60</text>
<path d="M749.4 412.2 v2.6" stroke="#555" stroke-width="0.5"/>
<text x="749.4" y="421.4" font-size="4.8" fill="#333" text-anchor="middle" font-family="Liberation Sans, sans-serif">80</text>
</svg>
<div class="b " style="left:143.5px;top:69.1px;width:338.7px;height:312.2px;background:#fefefe;border-radius:3.6px;box-shadow:0 7px 18px 2px rgba(0,0,0,0.22),0 0 1.5px rgba(0,0,0,0.30);overflow:hidden;"></div>
<div class="b" style="left:143.5px;top:69.1px;width:338.7px;height:14.7px;background:#f3f3f3;border-radius:3.6px 3.6px 0 0"></div>
<span class="t" style="left:146.7px;top:73px;font-size:5.78px;line-height:6px;color:#909090;-webkit-text-stroke:0.22px;">Block Model : Raven Fe</span>
<span class="t" style="left:445.53px;top:73px;font-size:6px;line-height:6px;color:#9a9a9a;-webkit-text-stroke:0.22px;">?</span>
<svg class="b" style="left:467.6px;top:73.6px" width="6" height="6" viewBox="0 0 6 6"><path d="M0.5 0.5 l4.8 4.8 M5.3 0.5 l-4.8 4.8" stroke="#8a8a8a" stroke-width="0.6"/></svg>
<div class="b " style="left:146.7px;top:97.4px;width:285.9px;height:280.2px;background:#fff;border:0.6px solid #e4e4e4;"></div>
<div class="b " style="left:182.2px;top:88.7px;width:89px;height:8.8px;background:#f1f1f1;"></div>
<div class="b " style="left:146.7px;top:87.6px;width:35.6px;height:10.3px;background:#fff;border:0.6px solid #e2e2e2;border-bottom:none;"></div>
<span class="t" style="left:149.9px;top:90px;font-size:5.6px;line-height:6px;color:#222;letter-spacing:0.06px;font-weight:bold;-webkit-text-stroke:0.22px;">Input Data</span>
<span class="t" style="left:184.9px;top:91px;font-size:4.91px;line-height:5px;color:#3a3a3a;-webkit-text-stroke:0.22px;">Display</span>
<span class="t" style="left:207.6px;top:91px;font-size:4.71px;line-height:5px;color:#3a3a3a;-webkit-text-stroke:0.22px;">Hatch</span>
<span class="t" style="left:226.7px;top:91px;font-size:4.9px;line-height:5px;color:#3a3a3a;-webkit-text-stroke:0.22px;">Label</span>
<span class="t" style="left:244.7px;top:91px;font-size:4.8px;line-height:5px;color:#3a3a3a;-webkit-text-stroke:0.22px;">Properties</span>
<div class="b " style="left:204.3px;top:89px;width:0.6px;height:8.2px;background:#fbfbfb;"></div>
<div class="b " style="left:223.2px;top:89px;width:0.6px;height:8.2px;background:#fbfbfb;"></div>
<div class="b " style="left:241.8px;top:89px;width:0.6px;height:8.2px;background:#fbfbfb;"></div>
<div class="b " style="left:152.7px;top:107.3px;width:187.9px;height:110.9px;border:0.6px solid #e0e0e0;border-radius:1px;"></div>
<div class="b " style="left:156.4px;top:104px;width:11.6px;height:6px;background:#fff;"></div>
<span class="t" style="left:157.8px;top:106px;font-size:4.96px;line-height:5px;color:#3a3a3a;-webkit-text-stroke:0.22px;">File</span>
<div class="b " style="left:152.7px;top:225.3px;width:187.9px;height:48.3px;border:0.6px solid #e0e0e0;border-radius:1px;"></div>
<div class="b " style="left:156.6px;top:221px;width:93px;height:8.6px;background:#fff;"></div>
<span class="t" style="left:176.3px;top:115px;font-size:5.04px;line-height:6px;color:#8e1b1b;-webkit-text-stroke:0.22px;">Block Model file</span>
<div class="b" style="left:214.2px;top:113.6px;width:108.6px;height:8.7px;background:#fff;border:0.8px solid #dedede;border-bottom:0.8px solid #c6c6c6;border-radius:1.3px;border-radius:1px"></div>
<span class="t" style="left:217.2px;top:116px;font-size:4.9px;line-height:5px;color:#333;-webkit-text-stroke:0.22px;">BM_Raven_All</span>
<svg class="b" style="left:314.2px;top:114.9px" width="7" height="6.4" viewBox="0 0 7 6.4"><rect x="0.5" y="0.5" width="6" height="5.4" rx="0.7" fill="#fff" stroke="#2a4f86" stroke-width="0.55"/><rect x="0.5" y="0.5" width="6" height="1.2" fill="#2a4f86"/></svg>
<span class="t" style="left:200.5px;top:128px;font-size:5.12px;line-height:6px;color:#3a3a3a;-webkit-text-stroke:0.22px;">Type</span>
<div class="b" style="left:214.2px;top:126.6px;width:46.5px;height:8.7px;background:#fff;border:0.8px solid #dedede;border-bottom:0.8px solid #c6c6c6;border-radius:1.3px;border-radius:1px"></div>
<span class="t" style="left:217.2px;top:129px;font-size:4.9px;line-height:5px;color:#333;-webkit-text-stroke:0.22px;">DATA</span>
<svg class="b" style="left:254.6px;top:129.6px" width="4.4" height="3" viewBox="0 0 4.4 3"><path d="M0.4 0.6 l1.8 1.7 l1.8 -1.7" fill="none" stroke="#7a7a7a" stroke-width="0.55"/></svg>
<span class="t" style="left:198.9px;top:140px;font-size:5.6px;line-height:6px;color:#3a3a3a;letter-spacing:0.04px;-webkit-text-stroke:0.22px;">Filter</span>
<div class="b" style="left:214.2px;top:138.9px;width:108.6px;height:8.7px;background:#fff;border:0.8px solid #dedede;border-bottom:0.8px solid #c6c6c6;border-radius:1.3px;border-radius:1px"></div>
<span class="t" style="left:217.2px;top:141px;font-size:4.9px;line-height:5px;color:#333;-webkit-text-stroke:0.22px;">=[TFe]&gt;50</span>
<span class="t" style="left:190.9px;top:153px;font-size:5.03px;line-height:6px;color:#8e1b1b;-webkit-text-stroke:0.22px;">East field</span>
<div class="b" style="left:214.2px;top:152.1px;width:46.5px;height:8.7px;background:#fff;border:0.8px solid #dedede;border-bottom:0.8px solid #c6c6c6;border-radius:1.3px;border-radius:1px"></div>
<span class="t" style="left:217.2px;top:154px;font-size:4.9px;line-height:5px;color:#333;-webkit-text-stroke:0.22px;">East</span>
<svg class="b" style="left:254px;top:154.1px" width="4" height="5" viewBox="0 0 4 5"><path d="M0.3 0.8 h3.4 M0.3 2.4 h3.4 M0.3 4 h3.4" stroke="#666" stroke-width="0.6"/></svg>
<span class="t" style="left:188.1px;top:166px;font-size:5.16px;line-height:6px;color:#8e1b1b;-webkit-text-stroke:0.22px;">North field</span>
<div class="b" style="left:214.2px;top:164.8px;width:46.5px;height:8.7px;background:#fff;border:0.8px solid #dedede;border-bottom:0.8px solid #c6c6c6;border-radius:1.3px;border-radius:1px"></div>
<span class="t" style="left:217.2px;top:167px;font-size:4.9px;line-height:5px;color:#333;-webkit-text-stroke:0.22px;">North</span>
<svg class="b" style="left:254px;top:166.8px" width="4" height="5" viewBox="0 0 4 5"><path d="M0.3 0.8 h3.4 M0.3 2.4 h3.4 M0.3 4 h3.4" stroke="#666" stroke-width="0.6"/></svg>
<span class="t" style="left:197.6px;top:179px;font-size:5.14px;line-height:6px;color:#8e1b1b;-webkit-text-stroke:0.22px;">Z field</span>
<div class="b" style="left:214.2px;top:177.6px;width:46.5px;height:8.7px;background:#fff;border:0.8px solid #dedede;border-bottom:0.8px solid #c6c6c6;border-radius:1.3px;border-radius:1px"></div>
<span class="t" style="left:217.2px;top:180px;font-size:4.9px;line-height:5px;color:#333;-webkit-text-stroke:0.22px;">RL</span>
<svg class="b" style="left:254px;top:179.6px" width="4" height="5" viewBox="0 0 4 5"><path d="M0.3 0.8 h3.4 M0.3 2.4 h3.4 M0.3 4 h3.4" stroke="#666" stroke-width="0.6"/></svg>
<span class="t" style="left:178.2px;top:192px;font-size:5.05px;line-height:6px;color:#3a3a3a;-webkit-text-stroke:0.22px;">Thickness field</span>
<div class="b" style="left:214.2px;top:190.4px;width:46.5px;height:8.7px;background:#fff;border:0.8px solid #dedede;border-bottom:0.8px solid #c6c6c6;border-radius:1.3px;border-radius:1px"></div>
<svg class="b" style="left:254px;top:192.4px" width="4" height="5" viewBox="0 0 4 5"><path d="M0.3 0.8 h3.4 M0.3 2.4 h3.4 M0.3 4 h3.4" stroke="#666" stroke-width="0.6"/></svg>
<span class="t" style="left:184.2px;top:205px;font-size:5.03px;line-height:6px;color:#3a3a3a;-webkit-text-stroke:0.22px;">Density field</span>
<div class="b" style="left:214.2px;top:203.4px;width:46.5px;height:8.7px;background:#fff;border:0.8px solid #dedede;border-bottom:0.8px solid #c6c6c6;border-radius:1.3px;border-radius:1px"></div>
<svg class="b" style="left:254px;top:205.4px" width="4" height="5" viewBox="0 0 4 5"><path d="M0.3 0.8 h3.4 M0.3 2.4 h3.4 M0.3 4 h3.4" stroke="#666" stroke-width="0.6"/></svg>
<svg class="b" style="left:189.3px;top:140.05px" width="6.5" height="6.5" viewBox="0 0 10 10"><rect x="0" y="0" width="10" height="10" rx="2" fill="#0b5cb8"/><path d="M2.4 5.2 l1.9 1.9 l3.4 -3.9" fill="none" stroke="#fff" stroke-width="1.3"/></svg>
<div class="b " style="left:299.4px;top:139.6px;width:15.4px;height:7.4px;background:#eef7fb;"></div>
<span class="t" style="left:305.6px;top:139px;font-size:7.4px;line-height:9px;color:#777;font-style:italic;font-family:'Liberation Serif',serif;-webkit-text-stroke:0.22px;">f</span>
<span class="t" style="left:308.2px;top:143px;font-size:3.4px;line-height:4px;color:#888;font-style:italic;-webkit-text-stroke:0.22px;">(x)</span>
<svg class="b" style="left:316.8px;top:140.2px" width="5.4" height="6" viewBox="0 0 5.4 6"><rect x="0.4" y="1.4" width="4.6" height="3.8" fill="#999" stroke="#777" stroke-width="0.5"/><rect x="1" y="0.4" width="3.4" height="1.4" fill="#bbb"/><rect x="1.2" y="3" width="3" height="1.2" fill="#e6e6e6"/></svg>
<svg class="b" style="left:250px;top:134px" width="70" height="20" viewBox="250 134 70 20"><path d="M259 142.75 H296.2" stroke="#e3141c" stroke-width="1.65" fill="none"/><path d="M253.4 142.8 L260.2 139 V146.6z" fill="#e3141c"/><rect x="298.9" y="137.1" width="16.6" height="13.3" fill="none" stroke="#e3141c" stroke-width="1.7"/></svg>
<svg class="b" style="left:158.3px;top:222.3px" width="6.6" height="6.6" viewBox="0 0 10 10"><rect x="0.6" y="0.6" width="8.8" height="8.8" rx="2" fill="#fdfdfd" stroke="#8a8a8a" stroke-width="1.15"/></svg>
<span class="t" style="left:167.9px;top:223px;font-size:5.09px;line-height:6px;color:#3a3a3a;-webkit-text-stroke:0.22px;">Render With Scaled Block Volumes</span>
<svg class="b" style="left:158.2px;top:236.9px" width="6.2" height="6.2" viewBox="0 0 6.2 6.2"><circle cx="3.1" cy="3.1" r="2.5" fill="#fbfbfb" stroke="#cfcfcf" stroke-width="0.6"/></svg>
<span class="t" style="left:166.3px;top:238px;font-size:4.94px;line-height:5px;color:#9a9a9a;-webkit-text-stroke:0.22px;">Factor</span>
<div class="b " style="left:214.2px;top:235.2px;width:40.7px;height:9.2px;background:#fff;border:0.6px solid #cfcfcf;border-radius:1px;"></div>
<svg class="b" style="left:158.2px;top:249.6px" width="6.2" height="6.2" viewBox="0 0 6.2 6.2"><circle cx="3.1" cy="3.1" r="2.5" fill="#fbfbfb" stroke="#8a8a8a" stroke-width="0.9"/></svg>
<span class="t" style="left:166.3px;top:250px;font-size:5.14px;line-height:6px;color:#9a9a9a;-webkit-text-stroke:0.22px;">Factor field</span>
<div class="b " style="left:214.2px;top:248.1px;width:46.6px;height:9.1px;background:#fff;border:0.6px solid #d8d8d8;border-radius:1px;"></div>
<span class="t" style="left:217.2px;top:250px;font-size:4.56px;line-height:5px;color:#a9a9a9;-webkit-text-stroke:0.22px;">mWth_VA</span>
<svg class="b" style="left:254px;top:250.3px" width="4" height="5" viewBox="0 0 4 5"><path d="M0.3 0.8 h3.4 M0.3 2.4 h3.4 M0.3 4 h3.4" stroke="#b5b5b5" stroke-width="0.6"/></svg>
<svg class="b" style="left:158.3px;top:261.5px" width="6.2" height="6.2" viewBox="0 0 10 10"><rect x="0.6" y="0.6" width="8.8" height="8.8" rx="2" fill="#fdfdfd" stroke="#c9c9c9" stroke-width="1.15"/></svg>
<span class="t" style="left:166px;top:262px;font-size:5.11px;line-height:6px;color:#9a9a9a;-webkit-text-stroke:0.22px;">Retain original Z dimension</span>
<div class="b" style="left:440.5px;top:87.6px;width:38px;height:10.3px;background:#fdfdfd;border:0.6px solid #e0e0e0;border-bottom-color:#cfcfcf;border-radius:1.6px"></div>
<span class="t" style="left:455.96px;top:91px;font-size:4.9px;line-height:5px;color:#222;-webkit-text-stroke:0.22px;">OK</span>
<div class="b" style="left:440.5px;top:102.2px;width:38px;height:10.3px;background:#fdfdfd;border:0.6px solid #e0e0e0;border-bottom-color:#cfcfcf;border-radius:1.6px"></div>
<span class="t" style="left:451.87px;top:105px;font-size:4.9px;line-height:5px;color:#222;-webkit-text-stroke:0.22px;">Cancel</span>
<div class="b" style="left:440.5px;top:120.2px;width:38px;height:10.3px;background:#fdfdfd;border:0.6px solid #e0e0e0;border-bottom-color:#cfcfcf;border-radius:1.6px"></div>
<div class="b" style="left:440.5px;top:135.4px;width:38px;height:10.3px;background:#f7f7f7;border:0.6px solid #f0f0f0;border-bottom-color:#ececec;border-radius:1.6px"></div>
<span class="t" style="left:453.92px;top:139px;font-size:4.9px;line-height:5px;color:#a5a5a5;-webkit-text-stroke:0.22px;">Save</span>
<div class="b" style="left:440.5px;top:150.2px;width:38px;height:10.3px;background:#fdfdfd;border:0.6px solid #e0e0e0;border-bottom-color:#cfcfcf;border-radius:1.6px"></div>
<span class="t" style="left:450.51px;top:153px;font-size:4.9px;line-height:5px;color:#222;-webkit-text-stroke:0.22px;">Save As</span>
<div class="b" style="left:440.5px;top:165px;width:38px;height:10.3px;background:#f7f7f7;border:0.6px solid #f0f0f0;border-bottom-color:#ececec;border-radius:1.6px"></div>
<span class="t" style="left:453.37px;top:168px;font-size:4.9px;line-height:5px;color:#a5a5a5;-webkit-text-stroke:0.22px;">Apply</span>
<span class="t" style="left:452px;top:122px;font-size:5.22px;line-height:6px;color:#222;-webkit-text-stroke:0.22px;">Forms</span>
<div class="b " style="left:469.6px;top:121.6px;width:0.5px;height:7.6px;background:#cfcfcf;"></div>
<svg class="b" style="left:471.8px;top:124px" width="4.4" height="3" viewBox="0 0 4.4 3"><path d="M0.3 0.4 h3.8 l-1.9 2.2z" fill="#222"/></svg>
<svg class="b" style="left:474.4px;top:374.4px" width="6.4" height="4.4" viewBox="0 0 6.4 4.4"><path d="M0.6 3.8 l2.6 -2.9 l2.6 2.9" fill="none" stroke="#9c9c9c" stroke-width="0.75"/></svg>
<svg class="b" style="left:55px;top:185px" width="110" height="132" viewBox="55 185 110 132"><path d="M60.6 312.4 L154.6 195.4" stroke="#e3141c" stroke-width="1.55" fill="none"/><path d="M158.9 190 L157.4 198.6 L151.2 193.6z" fill="#e3141c"/></svg>
<div class="b " style="left:0px;top:429.8px;width:766px;height:10.2px;background:#f0f0f0;"></div>
<svg class="b" style="left:1.6px;top:431.6px;" width="9" height="8" viewBox="0 0 9 8">
<path d="M2 1 h5.8 l-1.2 5.6 h-5.8z" fill="#fff" stroke="#555" stroke-width="0.7"/>
</svg>
<svg class="b" style="left:20.4px;top:433.2px" width="6" height="6" viewBox="0 0 6 6"><circle cx="3" cy="3" r="2.1" fill="#8fd08f" stroke="#58a858" stroke-width="0.7"/></svg>
<span class="t" style="left:405.2px;top:433px;font-size:5.65px;line-height:6px;color:#4a4a4a;">(19015.1, 35441.8, 104.2)</span>
<div class="b " style="left:477px;top:430.2px;width:36.5px;height:9.8px;background:#d9d6e8;"></div>
<svg class="b" style="left:478.6px;top:432px;" width="9" height="8" viewBox="0 0 9 8">
<path d="M0.6 2 l2.4 -1.2 v5.4 l-2.4 1.2z M3.4 1.6 l2.4 -1.2 v5.4 l-2.4 1.2z" fill="#cfe0f4" stroke="#3b6fb0" stroke-width="0.6"/><path d="M6.2 1.2 l1.8 -0.8 v5.4 l-1.8 0.8z" fill="#fff" stroke="#777" stroke-width="0.5"/>
</svg>
<span class="t" style="left:490px;top:433px;font-size:5.81px;line-height:6px;color:#6a6a96;">Clipping</span>
<span class="t" style="left:519.8px;top:433px;font-size:5.83px;line-height:6px;color:#4a4a4a;">Northing: 35441.7538, Towards: 25, Away: [25], Step: [50]</span>
<svg class="b" style="left:678.6px;top:431.2px;" width="8" height="9" viewBox="0 0 8 9">
<path d="M4.2 0.8 v6" stroke="#3b6fd0" stroke-width="0.8" stroke-dasharray="1.2 0.8"/><path d="M2.2 6.6 l2 -1 l2.4 1.4" fill="none" stroke="#c02020" stroke-width="0.8"/><circle cx="4.2" cy="6.2" r="0.9" fill="#20a020"/><path d="M2.8 2 l1.4 -1.6 l1.4 1.6" fill="none" stroke="#3b6fd0" stroke-width="0.6"/>
</svg>
<span class="t" style="left:688.9px;top:433px;font-size:5.86px;line-height:6px;color:#4a4a4a;">Vertical Exaggeration</span>
<svg class="b" style="left:753.6px;top:431.4px;" width="9" height="9" viewBox="0 0 9 9">
<path d="M4.4 0.8 C2.8 0.8 2.3 2.4 2.3 3.8 C2.3 5.2 1.6 5.6 1 6.4 L7.8 6.4 C7.2 5.6 6.5 5.2 6.5 3.8 C6.5 2.4 6 0.8 4.4 0.8 Z" fill="#fdfdfd" stroke="#666" stroke-width="0.6"/><path d="M3.5 7.1 a0.9 0.9 0 0 0 1.8 0" fill="none" stroke="#666" stroke-width="0.6"/>
</svg>
</div></body></html>
